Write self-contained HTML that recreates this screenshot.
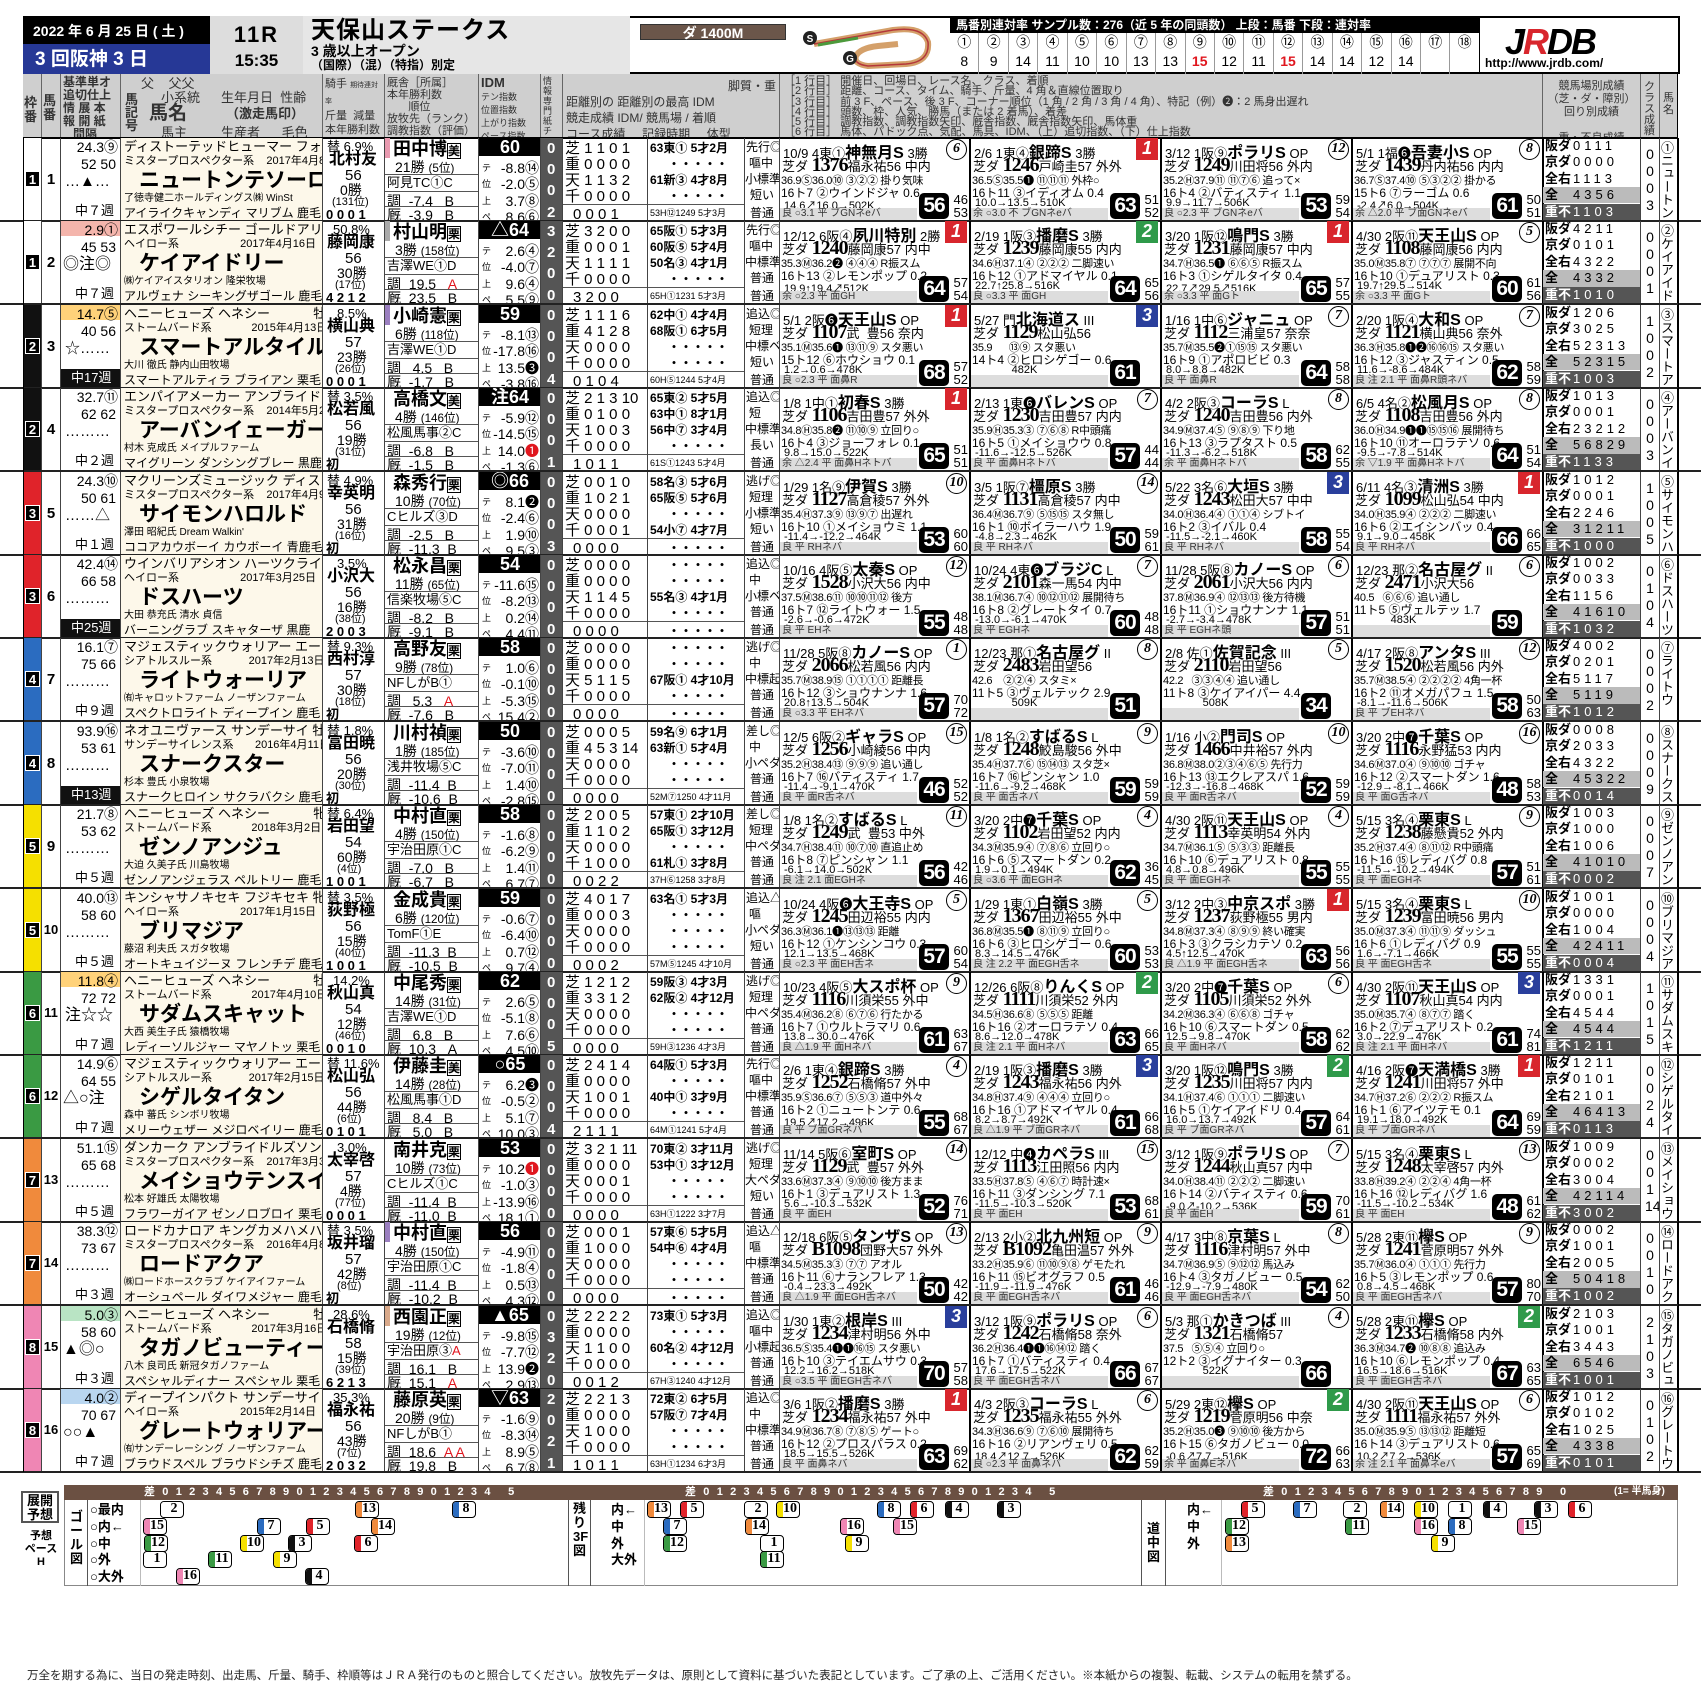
<!DOCTYPE html>
<html><head><meta charset="utf-8">
<style>
*{margin:0;padding:0;box-sizing:border-box}
body{width:1701px;height:1701px;position:relative;overflow:hidden;background:#fff;font-family:"Liberation Sans","Noto Sans CJK JP",sans-serif;color:#000}
.a{position:absolute;white-space:nowrap;line-height:1}
.r{position:absolute;left:0;width:1701px;height:84px;border-bottom:2px solid #222}
.c{position:absolute;top:0;height:82px;border-right:1px solid #444;overflow:hidden}
.L{position:absolute;white-space:nowrap;line-height:1}
.hl{position:absolute;left:0;right:0;border-top:1px solid #555}
.wk{left:23px;width:19px}
.ub{left:42px;width:19px;font-size:15px;text-align:center;padding-top:33px;font-weight:bold}
.wb{position:absolute;left:2px;top:33px;width:15px;height:16px;background:#000;color:#fff;font-size:13px;font-weight:bold;text-align:center;line-height:16px;border:1px solid #fff}
.od{left:61px;width:60px;font-size:14px}
.nm{left:121px;width:202px;background:#fdf8ea}
.jk{left:323px;width:62px;text-align:center}
.tr{left:385px;width:94px}
.id{left:479px;width:62px}
.ck{left:541px;width:22px;background:#555;color:#fff;font-weight:bold;font-size:15px}
.cr{left:563px;width:85px;font-size:15px}
.ds{left:648px;width:97px;font-size:12px;font-weight:bold}
.st{left:745px;width:35px;font-size:12px;text-align:center}
.p{width:191px;border-right:2px solid #000;font-size:13px}
.ss{left:1543px;width:98px;font-size:14px}
.cl{left:1641px;width:19px;font-size:14px;text-align:center}
.vn{left:1660px;width:18px;font-size:13px;writing-mode:vertical-rl;text-orientation:upright;padding-top:3px;padding-right:1px;border-right:1px solid #000}
.k{position:absolute;right:20px;top:55px;width:30px;height:26px;background:#000;color:#fff;font-size:21px;font-weight:bold;border-radius:5px;text-align:center;line-height:26px;letter-spacing:-1px}
.m{position:absolute;right:1px;top:55px;font-size:13px;line-height:13px;text-align:right}
.g{position:absolute;left:0;right:52px;top:70px;height:12px;background:#ddd;font-size:10px;line-height:12px;color:#333;padding-left:2px}
.f{position:absolute;right:2px;top:1px;width:21px;height:21px;border:1.5px solid #000;border-radius:50%;font-size:14px;font-weight:bold;text-align:center;line-height:18px;font-family:"Liberation Serif",serif}
.fr,.fg,.fb{border-radius:0;border:none;color:#fff;font-family:"Liberation Sans",sans-serif;font-size:18px;line-height:21px;width:22px;height:22px;top:0}
.fr{background:#d8262d}.fg{background:#2f9a4a}.fb{background:#2a3f9c}
.t{position:absolute;left:3px;top:1px;font-size:13px}
.t b{font-size:16px}
.tm{position:absolute;left:2px;top:16px;font-size:13px}
.tm b{font-family:"Liberation Serif",serif;font-size:20px;letter-spacing:-1px}
.l3{position:absolute;left:1px;top:34px;font-size:11px;letter-spacing:-0.3px}
.l4{position:absolute;left:1px;top:46px;font-size:12px}
.l5{position:absolute;left:4px;top:59px;font-size:11px}
.sr{position:absolute;left:0;width:98px;height:16.4px;line-height:16.4px;font-size:13px;letter-spacing:4px;padding-left:2px}
.sr b{display:inline-block;width:28px;letter-spacing:0}
.idh{position:absolute;left:0;top:0;width:62px;height:18px;background:#000;color:#fff;font-weight:bold;font-size:18px;text-align:center;line-height:18px}
.ir{position:absolute;left:0;width:62px;font-size:14px;text-align:right;padding-right:2px}
.ir i{font-style:normal;font-size:9px;position:absolute;left:3px;top:3px}
.mk{position:absolute;height:17px;width:24px;border:1.5px solid #000;border-radius:4px;font-family:"Liberation Serif",serif;font-weight:bold;font-size:14px;text-align:center;line-height:14px;background:#fff;overflow:hidden;padding-left:4px}
.mk s{position:absolute;left:0;top:0;bottom:0;width:6px;text-decoration:none}
.hd{position:absolute;top:74px;height:64px;background:#cfcfcf;border-right:1px solid #666;font-size:12px;line-height:1.15;overflow:hidden}
</style></head><body>

<!-- HEADER -->
<div class="a" style="left:23px;top:16px;width:1655px;height:58px;border:2px solid #000;border-left:none;border-right:none"></div>
<div class="a" style="left:23px;top:16px;width:187px;height:29px;background:#000;color:#fff;font-size:14px;font-weight:bold;padding:8px 0 0 10px">2022 年 6 月 25 日 ( 土 )</div>
<div class="a" style="left:23px;top:44px;width:187px;height:30px;background:#263896;color:#fff;font-size:19px;font-weight:bold;padding:6px 0 0 12px">3 回阪神 3 日</div>
<div class="a" style="left:210px;top:16px;width:93px;height:58px;background:#ddd;font-weight:bold;text-align:center"><div style="font-size:22px;padding-top:8px;letter-spacing:2px">11R</div><div style="font-size:17px;padding-top:6px">15:35</div></div>
<div class="a" style="left:303px;top:16px;width:327px;height:58px;background:#e6e6e6;padding-left:8px;overflow:hidden"><div style="font-size:24px;font-weight:bold;padding-top:2px;letter-spacing:1px;line-height:26px">天保山ステークス</div><div style="font-size:14px;font-weight:bold;line-height:15px">3 歳以上オープン</div><div style="font-size:12px;font-weight:bold;line-height:13px">（国際）（混）（特指）別定</div></div>
<div class="a" style="left:640px;top:24px;width:146px;height:16px;background:#6b564a;color:#fff;font-size:14px;font-weight:bold;text-align:center;line-height:16px;border:1px solid #333">ダ 1400M</div>
<svg class="a" style="left:798px;top:18px" width="152" height="54" viewBox="0 0 152 54"><path d="M16 26 L95 12 Q125 8 130 24 Q132 44 108 46 L70 48 Q55 46 58 38 Q62 30 80 28 L100 26" fill="none" stroke="#d4a06a" stroke-width="6"/><path d="M16 26 L95 12 Q125 8 130 24 Q132 44 108 46 L70 48 Q55 46 58 38" fill="none" stroke="#b4363a" stroke-width="1.5"/><path d="M20 27 L60 20" stroke="#4c9a3c" stroke-width="3"/><circle cx="12" cy="20" r="7" fill="#222"/><text x="12" y="24" font-size="10" fill="#fff" text-anchor="middle" font-weight="bold">S</text><circle cx="52" cy="40" r="7" fill="#222"/><text x="52" y="44" font-size="10" fill="#fff" text-anchor="middle" font-weight="bold">G</text></svg>
<div class="a" style="left:950px;top:17px;width:530px;height:16px;background:#000;color:#fff;font-size:12px;font-weight:bold;line-height:16px;padding-left:6px">馬番別連対率 サンプル数：276（近 5 年の同頭数） 上段：馬番 下段：連対率</div>
<div class="a" style="left:950px;top:33px;width:530px;height:41px;font-size:14px;display:flex">
<div style="flex:1;text-align:center;border-right:1px solid #999;line-height:19px">①<br>8</div><div style="flex:1;text-align:center;border-right:1px solid #999;line-height:19px">②<br>9</div><div style="flex:1;text-align:center;border-right:1px solid #999;line-height:19px">③<br>14</div><div style="flex:1;text-align:center;border-right:1px solid #999;line-height:19px">④<br>11</div><div style="flex:1;text-align:center;border-right:1px solid #999;line-height:19px">⑤<br>10</div><div style="flex:1;text-align:center;border-right:1px solid #999;line-height:19px">⑥<br>10</div><div style="flex:1;text-align:center;border-right:1px solid #999;line-height:19px">⑦<br>13</div><div style="flex:1;text-align:center;border-right:1px solid #999;line-height:19px">⑧<br>13</div><div style="flex:1;text-align:center;border-right:1px solid #999;line-height:19px">⑨<br><b style="color:#e0161e">15</b></div><div style="flex:1;text-align:center;border-right:1px solid #999;line-height:19px">⑩<br>12</div><div style="flex:1;text-align:center;border-right:1px solid #999;line-height:19px">⑪<br>11</div><div style="flex:1;text-align:center;border-right:1px solid #999;line-height:19px">⑫<br><b style="color:#e0161e">15</b></div><div style="flex:1;text-align:center;border-right:1px solid #999;line-height:19px">⑬<br>14</div><div style="flex:1;text-align:center;border-right:1px solid #999;line-height:19px">⑭<br>14</div><div style="flex:1;text-align:center;border-right:1px solid #999;line-height:19px">⑮<br>12</div><div style="flex:1;text-align:center;border-right:1px solid #999;line-height:19px">⑯<br>14</div><div style="flex:1;text-align:center;border-right:1px solid #999;line-height:19px">⑰<br>&nbsp;</div><div style="flex:1;text-align:center;border-right:1px solid #000;line-height:19px">⑱<br>&nbsp;</div></div>
<div class="a" style="left:1505px;top:24px;font-size:36px;font-weight:bold;font-style:italic;letter-spacing:-2px;font-family:'Liberation Sans',sans-serif">J<span style="color:#d8262d">R</span>DB</div>
<div class="a" style="left:1485px;top:57px;font-size:12px;font-weight:bold">http://www.jrdb.com/</div>
<div class="a" style="left:1678px;top:16px;height:58px;border-left:2px solid #000"></div>

<!-- COLUMN HEADER -->
<div class="hd" style="left:23px;width:19px;font-size:13px;padding:22px 1px 0;line-height:14px;font-weight:bold;color:#333">枠<br>番</div>
<div class="hd" style="left:42px;width:19px;font-size:13px;padding:20px 1px 0;line-height:14px;font-weight:bold;color:#333">馬<br>番</div>
<div class="hd" style="left:61px;width:60px;font-size:12px;padding:2px 2px;line-height:13px;font-weight:bold;color:#333">基準単オ<br>追切仕上<br>情 展 本<br>報 開 紙<br>&nbsp;&nbsp;&nbsp;間隔</div>
<div class="hd" style="left:121px;width:202px;font-size:13px;color:#333;padding:2px"><div class="L" style="left:20px;top:3px">父&nbsp;&nbsp;&nbsp;&nbsp;父父</div><div class="L" style="left:40px;top:17px">小系統</div><div class="L" style="left:100px;top:17px">生年月日&nbsp;&nbsp;性齢</div><div class="L" style="left:4px;top:19px;width:12px;white-space:normal;font-weight:bold">馬記号</div><div class="L" style="left:28px;top:30px;font-size:19px;font-weight:bold">馬名</div><div class="L" style="left:105px;top:33px;font-weight:bold">（激走馬印）</div><div class="L" style="left:40px;top:52px">馬主</div><div class="L" style="left:100px;top:52px">生産者&nbsp;&nbsp;&nbsp;&nbsp;&nbsp;&nbsp;毛色</div></div>
<div class="hd" style="left:323px;width:62px;padding:3px 2px;font-size:11px;line-height:14px;color:#333">騎手 <span style="font-size:7px">期待連対率</span><br>斤量&nbsp;&nbsp;減量<br>本年勝利数<br>&nbsp;&nbsp;&nbsp;順位<br>馬×騎手</div>
<div class="hd" style="left:385px;width:94px;padding:3px 2px;font-size:11px;line-height:12px;color:#333">厩舎［所属］<br>本年勝利数<br>&nbsp;&nbsp;&nbsp;&nbsp;&nbsp;&nbsp;&nbsp;順位<br>放牧先（ランク）<br>調教指数（評価）<br>厩舎指数（評価）</div>
<div class="hd" style="left:479px;width:62px;padding:2px 2px;font-size:9px;line-height:13px;color:#333"><b style="font-size:13px">IDM</b><br>テン指数<br>位置指数<br>上がり指数<br>ペース指数</div>
<div class="hd" style="left:541px;width:22px;font-size:9px;padding:2px 2px;line-height:10px;color:#333">情<br>報<br>専<br>門<br>紙<br>チ</div>
<div class="hd" style="left:563px;width:217px;font-size:12px;color:#333;padding:4px 3px;line-height:16px"><div style="text-align:right">脚質・重</div>距離別の 距離別の最高 IDM<br>競走成績 IDM/ 競馬場 / 着順<br>コース成績&nbsp;&nbsp;&nbsp;&nbsp;&nbsp;記録時期&nbsp;&nbsp;&nbsp;&nbsp;&nbsp;体型</div>
<div class="hd" style="left:780px;width:763px;font-size:11px;line-height:10.3px;padding:2px 4px;color:#333">［1 行目］ 開催日、回場日、レース名、クラス、着順<br>［2 行目］ 距離、コース、タイム、騎手、斤量、4 角＆直線位置取り<br>［3 行目］ 前 3 F、ペース、後 3 F、コーナー順位（1 角 / 2 角 / 3 角 / 4 角）、特記（例）❷：2 馬身出遅れ<br>［4 行目］ 頭数、枠、人気、勝馬（または 2 着馬）、着差<br>［5 行目］ 調教指数、調教指数矢印、厩舎指数、厩舎指数矢印、馬体重<br>［6 行目］ 馬体、パドック点、気配、馬具、IDM、（上）追切指数、（下）仕上指数</div>
<div class="hd" style="left:1543px;width:98px;font-size:11px;line-height:13px;padding:6px 2px;text-align:center;color:#333">競馬場別成績<br>（芝・ダ・障別）<br>回り別成績<br><br>重・不良成績</div>
<div class="hd" style="left:1641px;width:19px;font-size:11px;line-height:11px;padding:8px 3px;color:#333">クラス成績</div>
<div class="hd" style="left:1660px;width:18px;font-size:11px;line-height:12px;padding:18px 3px;color:#333;border-right:1px solid #000">馬名</div>
<div class="a" style="left:23px;top:137px;width:1655px;border-top:2px solid #000"></div>

<!-- ROWS -->
<div id="rows">
<!-- Row 1 -->
<div class="r" style="top:138px">
<div class="c wk" style="background:#fff"><div class="wb">1</div></div>
<div class="c ub">1</div>
<div class="c od"><div class="L" style="right:2px;top:2px">24.3⑨</div><div class="L" style="right:4px;top:19px">52 50</div><div class="L" style="left:4px;top:36px;font-size:15px">…▲…</div><div class="L" style="left:14px;top:66px;font-size:13px">中７週</div></div>
<div class="c nm"><div class="L" style="left:3px;top:2px;font-size:13px">ディストーテッドヒューマー フォ&nbsp;&nbsp;牡5</div><div class="L" style="left:3px;top:18px;font-size:11px">ミスタープロスペクター系&nbsp;&nbsp;&nbsp;&nbsp;2017年4月8日</div><div class="L" style="left:18px;top:32px;font-size:21px;font-weight:bold">ニュートンテソーロ</div><div class="L" style="left:3px;top:56px;font-size:10px">了徳寺健二ホールディングス㈱ WinSt</div><div class="L" style="left:3px;top:69px;font-size:12px">アイライクキャンディ マリブム 鹿毛</div></div>
<div class="c jk"><div class="L" style="left:4px;top:2px;font-size:13px">替 6.9%</div><div class="L" style="left:6px;top:14px;font-size:16px;font-weight:bold">北村友</div><div class="L" style="left:22px;top:30px;font-size:15px">56</div><div class="L" style="left:17px;top:45px;font-size:14px">0勝</div><div class="L" style="left:9px;top:59px;font-size:11px">(131位)</div><div class="L" style="left:3px;top:70px;font-size:13px;font-weight:bold">0 0 0 1</div></div>
<div class="c tr"><div class="L" style="left:0;top:0;width:5px;height:20px;background:#e99ab0"></div><div class="L" style="left:8px;top:2px;font-size:18px;font-weight:bold">田中博<span style="font-size:12px;border:1px solid #000">美</span></div><div class="L" style="left:10px;top:22px;font-size:14px">21勝 <small>(5位)</small></div><div class="hl" style="top:36px"></div><div class="L" style="left:2px;top:38px;font-size:13px">阿見TC①C</div><div class="hl" style="top:53px"></div><div class="L" style="left:2px;top:56px;font-size:14px">調&nbsp;&nbsp;-7.4&nbsp;&nbsp;&nbsp;B</div><div class="hl" style="top:68px"></div><div class="L" style="left:2px;top:70px;font-size:14px">厩&nbsp;&nbsp;-3.9&nbsp;&nbsp;&nbsp;B</div></div>
<div class="c id"><div class="idh">60</div><div class="ir" style="top:20px"><i>テ</i>-8.8⑭</div><div class="ir" style="top:36px"><i>位</i>-2.0⑤</div><div class="ir" style="top:53px"><i>上</i>3.7⑧</div><div class="ir" style="top:69px"><i>ペ</i>8.6⑥</div></div>
<div class="c ck"><div class="L" style="left:6px;top:3px">0</div><div class="L" style="left:6px;top:24px">0</div><div class="L" style="left:6px;top:45px">0</div><div class="L" style="left:6px;top:67px">2</div></div>
<div class="c cr"><div class="L" style="left:2px;top:3px">芝 1 1 0 1</div><div class="L" style="left:2px;top:19px">重 0 0 0 0</div><div class="L" style="left:2px;top:35px">天 1 1 3 2</div><div class="L" style="left:2px;top:51px">千 0 0 0 0</div><div class="hl" style="top:66px"></div><div class="L" style="left:10px;top:69px">0 0 0 1</div></div>
<div class="c ds"><div class="L" style="left:2px;top:4px">63東① 5才2月</div><div class="L" style="left:20px;top:20px">・・・・・</div><div class="L" style="left:2px;top:36px">61新③ 4才8月</div><div class="L" style="left:20px;top:52px">・・・・・</div><div class="hl" style="top:66px"></div><div class="L" style="left:2px;top:71px;font-size:9px;font-weight:normal">53H⑫1249 5才3月</div></div>
<div class="c st"><div class="L" style="left:1px;top:3px">先行◎</div><div class="L" style="left:4px;top:19px">嘔中</div><div class="L" style="left:0;top:35px">小標準</div><div class="L" style="left:5px;top:51px">短い</div><div class="L" style="left:5px;top:69px">普通</div></div>
<div class="c p" style="left:780px"><div class="t">10/9 4東①<b>神無月S</b> 3勝</div><i class="f">6</i><div class="tm">芝ダ <b>1376</b>福永祐56 中内</div><div class="l3">36.9Ⓢ36.0⑩ ③②② 掛り気味</div><div class="l4">16ト7 ②ウインドジャ 0.6</div><div class="l5">14.6↗16.0→502K</div><b class="k">56</b><span class="m">46<br>53</span><div class="g">良 ○3.1 平 ブGNネeバ</div></div>
<div class="c p" style="left:971px"><div class="t">2/6 1東④<b>銀蹄S</b> 3勝</div><i class="f fr">1</i><div class="tm">芝ダ <b>1246</b>戸崎圭57 外外</div><div class="l3">36.5Ⓢ35.5❶ ⑪⑪⑪ 外枠○</div><div class="l4">16ト11 ③イディオム 0.4</div><div class="l5">10.0→13.5→510K</div><b class="k">63</b><span class="m">51<br>52</span><div class="g">余 ○3.0 不 ブGNネeバ</div></div>
<div class="c p" style="left:1162px"><div class="t">3/12 1阪⑨<b>ポラリS</b> OP</div><i class="f">12</i><div class="tm">芝ダ <b>1249</b>川田将56 外内</div><div class="l3">35.2Ⓗ37.9⑪ ⑪⑦⑥ 追って×</div><div class="l4">16ト4 ②バティスティ 1.1</div><div class="l5">9.9→11.7→506K</div><b class="k">53</b><span class="m">59<br>54</span><div class="g">良 ○2.3 平 ブGNネeバ</div></div>
<div class="c p" style="left:1353px"><div class="t">5/1 1福❻<b>吾妻小S</b> OP</div><i class="f">8</i><div class="tm">芝ダ <b>1439</b>丹内祐56 内内</div><div class="l3">36.7Ⓢ37.4⑩ ⑤③②② 掛かる</div><div class="l4">15ト6 ⑦ラーゴム 0.6</div><div class="l5">-2.4↗6.0→504K</div><b class="k">61</b><span class="m">50<br>51</span><div class="g">余 △2.0 平 ブ面GNネeバ</div></div>
<div class="c ss"><div class="sr" style="top:0"><b>阪ダ</b>0111</div><div class="sr" style="top:16px"><b>京ダ</b>0000</div><div class="sr" style="top:33px"><b>全右</b>1113</div><div class="sr" style="top:49px;background:#bbb"><b>全</b>4356</div><div class="sr" style="top:66px;background:#555;color:#fff"><b>重不</b>1103</div></div>
<div class="c cl"><div class="L" style="left:4px;top:8px;line-height:17px;white-space:normal;width:10px">0 0 0 3</div></div>
<div class="c vn">①ニュートン</div>
</div>

<!-- Row 2 -->
<div class="r" style="top:221.4px">
<div class="c wk" style="background:#fff"><div class="wb">1</div></div>
<div class="c ub">2</div>
<div class="c od"><div class="L" style="left:0;top:0;width:60px;height:15px;background:#f4b5ac"></div><div class="L" style="right:2px;top:2px">2.9①</div><div class="L" style="right:4px;top:19px">45 53</div><div class="L" style="left:2px;top:36px;font-size:16px">◎注◎</div><div class="L" style="left:14px;top:66px;font-size:13px">中７週</div></div>
<div class="c nm"><div class="L" style="left:3px;top:2px;font-size:13px">エスポワールシチー ゴールドアリ&nbsp;&nbsp;牡5</div><div class="L" style="left:3px;top:18px;font-size:11px">ヘイロー系&nbsp;&nbsp;&nbsp;&nbsp;&nbsp;&nbsp;&nbsp;&nbsp;&nbsp;&nbsp;&nbsp;&nbsp;&nbsp;&nbsp;&nbsp;&nbsp;&nbsp;&nbsp;&nbsp;&nbsp;2017年4月16日</div><div class="L" style="left:18px;top:32px;font-size:21px;font-weight:bold">ケイアイドリー</div><div class="L" style="left:3px;top:56px;font-size:10px">㈱ケイアイスタリオン 隆栄牧場</div><div class="L" style="left:3px;top:69px;font-size:12px">アルヴェナ シーキングザゴール 鹿毛</div></div>
<div class="c jk"><div class="L" style="left:10px;top:2px;font-size:13px">50.8%</div><div class="L" style="left:4px;top:14px;font-size:16px;font-weight:bold">藤岡康</div><div class="L" style="left:22px;top:30px;font-size:15px">56</div><div class="L" style="left:14px;top:45px;font-size:14px">30勝</div><div class="L" style="left:12px;top:59px;font-size:11px">(17位)</div><div class="L" style="left:3px;top:70px;font-size:13px;font-weight:bold">4 2 1 2</div></div>
<div class="c tr"><div class="L" style="left:0;top:0;width:5px;height:20px;background:#aaa"></div><div class="L" style="left:8px;top:2px;font-size:18px;font-weight:bold">村山明<span style="font-size:12px;border:1px solid #000">栗</span></div><div class="L" style="left:10px;top:22px;font-size:14px">3勝 <small>(158位)</small></div><div class="hl" style="top:36px"></div><div class="L" style="left:2px;top:38px;font-size:13px">吉澤WE①D</div><div class="hl" style="top:53px"></div><div class="L" style="left:2px;top:56px;font-size:14px">調&nbsp;&nbsp;19.5&nbsp;&nbsp;&nbsp;<span style="color:#e0161e">A</span></div><div class="hl" style="top:68px"></div><div class="L" style="left:2px;top:70px;font-size:14px">厩&nbsp;&nbsp;23.5&nbsp;&nbsp;&nbsp;B</div></div>
<div class="c id"><div class="idh">△64</div><div class="ir" style="top:20px"><i>テ</i>2.6④</div><div class="ir" style="top:36px"><i>位</i>-4.0⑦</div><div class="ir" style="top:53px"><i>上</i>9.6④</div><div class="ir" style="top:69px"><i>ペ</i>5.5⑨</div></div>
<div class="c ck"><div class="L" style="left:6px;top:3px">3</div><div class="L" style="left:6px;top:24px">2</div><div class="L" style="left:6px;top:45px">0</div><div class="L" style="left:6px;top:67px">0</div></div>
<div class="c cr"><div class="L" style="left:2px;top:3px">芝 3 2 0 0</div><div class="L" style="left:2px;top:19px">重 0 0 0 1</div><div class="L" style="left:2px;top:35px">天 1 1 1 1</div><div class="L" style="left:2px;top:51px">千 0 0 0 0</div><div class="hl" style="top:66px"></div><div class="L" style="left:10px;top:69px">3 2 0 0</div></div>
<div class="c ds"><div class="L" style="left:2px;top:4px">65阪① 5才3月</div><div class="L" style="left:2px;top:20px">60阪⑤ 5才4月</div><div class="L" style="left:2px;top:36px">50名③ 4才1月</div><div class="L" style="left:20px;top:52px">・・・・・</div><div class="hl" style="top:66px"></div><div class="L" style="left:2px;top:71px;font-size:9px;font-weight:normal">65H①1231 5才3月</div></div>
<div class="c st"><div class="L" style="left:1px;top:3px">先行◎</div><div class="L" style="left:4px;top:19px">嘔中</div><div class="L" style="left:0;top:35px">中標準</div><div class="L" style="left:5px;top:51px">普通</div><div class="L" style="left:5px;top:69px">普通</div></div>
<div class="c p" style="left:780px"><div class="t">12/12 6阪④<b>夙川特別</b> 2勝</div><i class="f fr">1</i><div class="tm">芝ダ <b>1240</b>藤岡康57 内中</div><div class="l3">35.3Ⓜ36.2❷ ④④④ R振スム</div><div class="l4">16ト13 ②レモンポップ 0.2</div><div class="l5">19.9↑19.4↗512K</div><b class="k">64</b><span class="m">57<br>54</span><div class="g">余 ○2.3 平 面GH</div></div>
<div class="c p" style="left:971px"><div class="t">2/19 1阪③<b>播磨S</b> 3勝</div><i class="f fg">2</i><div class="tm">芝ダ <b>1239</b>藤岡康55 内内</div><div class="l3">34.6Ⓗ37.1④ ②②② 二脚速い</div><div class="l4">16ト12 ①アドマイヤル 0.1</div><div class="l5">22.7↑25.8→516K</div><b class="k">64</b><span class="m">65<br>56</span><div class="g">良 ○3.3 平 面GH</div></div>
<div class="c p" style="left:1162px"><div class="t">3/20 1阪⑫<b>鳴門S</b> 3勝</div><i class="f fr">1</i><div class="tm">芝ダ <b>1231</b>藤岡康57 中内</div><div class="l3">34.7Ⓗ36.5❶ ⑥⑥⑤ R振スム</div><div class="l4">16ト3 ①シゲルタイタ 0.4</div><div class="l5">22.7↗29.5↗516K</div><b class="k">65</b><span class="m">57<br>55</span><div class="g">余 ○3.3 平 面Gト</div></div>
<div class="c p" style="left:1353px"><div class="t">4/30 2阪⑪<b>天王山S</b> OP</div><i class="f">5</i><div class="tm">芝ダ <b>1108</b>藤岡康56 内内</div><div class="l3">35.0Ⓜ35.8⑦ ⑦⑦⑦ 展開不向</div><div class="l4">16ト10 ①デュアリスト 0.3</div><div class="l5">19.7↑29.5→514K</div><b class="k">60</b><span class="m">61<br>56</span><div class="g">余 ○3.3 平 面Gト</div></div>
<div class="c ss"><div class="sr" style="top:0"><b>阪ダ</b>4211</div><div class="sr" style="top:16px"><b>京ダ</b>0101</div><div class="sr" style="top:33px"><b>全右</b>4322</div><div class="sr" style="top:49px;background:#bbb"><b>全</b>4332</div><div class="sr" style="top:66px;background:#555;color:#fff"><b>重不</b>1010</div></div>
<div class="c cl"><div class="L" style="left:4px;top:8px;line-height:17px;white-space:normal;width:10px">0 0 0 1</div></div>
<div class="c vn">②ケイアイド</div>
</div>

<!-- Row 3 -->
<div class="r" style="top:304.8px">
<div class="c wk" style="background:#111"><div class="wb">2</div></div>
<div class="c ub">3</div>
<div class="c od"><div class="L" style="left:0;top:0;width:60px;height:15px;background:#ffd27a"></div><div class="L" style="right:2px;top:2px">14.7⑤</div><div class="L" style="right:4px;top:19px">40 56</div><div class="L" style="left:4px;top:36px;font-size:15px">☆……</div><div class="L" style="left:0;top:64px;width:60px;height:18px;background:#111;color:#fff;font-size:13px;padding:2px 0 0 10px">中17週</div></div>
<div class="c nm"><div class="L" style="left:3px;top:2px;font-size:13px">ヘニーヒューズ ヘネシー&nbsp;&nbsp;&nbsp;&nbsp;&nbsp;&nbsp;&nbsp;&nbsp;&nbsp;&nbsp;&nbsp;&nbsp;牡7</div><div class="L" style="left:3px;top:18px;font-size:11px">ストームバード系&nbsp;&nbsp;&nbsp;&nbsp;&nbsp;&nbsp;&nbsp;&nbsp;&nbsp;&nbsp;&nbsp;&nbsp;&nbsp;2015年4月13日</div><div class="L" style="left:18px;top:32px;font-size:21px;font-weight:bold">スマートアルタイル</div><div class="L" style="left:3px;top:56px;font-size:10px">大川 徹氏 静内山田牧場</div><div class="L" style="left:3px;top:69px;font-size:12px">スマートアルティラ ブライアン 栗毛</div></div>
<div class="c jk"><div class="L" style="left:14px;top:2px;font-size:13px">8.5%</div><div class="L" style="left:4px;top:14px;font-size:16px;font-weight:bold">横山典</div><div class="L" style="left:22px;top:30px;font-size:15px">57</div><div class="L" style="left:14px;top:45px;font-size:14px">23勝</div><div class="L" style="left:12px;top:59px;font-size:11px">(26位)</div><div class="L" style="left:3px;top:70px;font-size:13px;font-weight:bold">0 0 0 1</div></div>
<div class="c tr"><div class="L" style="left:0;top:0;width:5px;height:20px;background:#9b7fc0"></div><div class="L" style="left:8px;top:2px;font-size:18px;font-weight:bold">小崎憲<span style="font-size:12px;border:1px solid #000">栗</span></div><div class="L" style="left:10px;top:22px;font-size:14px">6勝 <small>(118位)</small></div><div class="hl" style="top:36px"></div><div class="L" style="left:2px;top:38px;font-size:13px">吉澤WE①D</div><div class="hl" style="top:53px"></div><div class="L" style="left:2px;top:56px;font-size:14px">調&nbsp;&nbsp;&nbsp;4.5&nbsp;&nbsp;&nbsp;B</div><div class="hl" style="top:68px"></div><div class="L" style="left:2px;top:70px;font-size:14px">厩&nbsp;&nbsp;-1.7&nbsp;&nbsp;&nbsp;B</div></div>
<div class="c id"><div class="idh">59</div><div class="ir" style="top:20px"><i>テ</i>-8.1⑬</div><div class="ir" style="top:36px"><i>位</i>-17.8⑯</div><div class="ir" style="top:53px"><i>上</i>13.5❸</div><div class="ir" style="top:69px"><i>ペ</i>-3.8⑯</div></div>
<div class="c ck"><div class="L" style="left:6px;top:3px">0</div><div class="L" style="left:6px;top:24px">0</div><div class="L" style="left:6px;top:45px">0</div><div class="L" style="left:6px;top:67px">4</div></div>
<div class="c cr"><div class="L" style="left:2px;top:3px">芝 1 1 1 6</div><div class="L" style="left:2px;top:19px">重 4 1 2 8</div><div class="L" style="left:2px;top:35px">天 0 0 0 0</div><div class="L" style="left:2px;top:51px">千 0 0 0 0</div><div class="hl" style="top:66px"></div><div class="L" style="left:10px;top:69px">0 1 0 4</div></div>
<div class="c ds"><div class="L" style="left:2px;top:4px">62中① 4才4月</div><div class="L" style="left:2px;top:20px">68阪① 6才5月</div><div class="L" style="left:20px;top:36px">・・・・・</div><div class="L" style="left:20px;top:52px">・・・・・</div><div class="hl" style="top:66px"></div><div class="L" style="left:2px;top:71px;font-size:9px;font-weight:normal">60H⑤1244 5才4月</div></div>
<div class="c st"><div class="L" style="left:1px;top:3px">追込◎</div><div class="L" style="left:4px;top:19px">短理</div><div class="L" style="left:0;top:35px">中標ベ</div><div class="L" style="left:5px;top:51px">短い</div><div class="L" style="left:5px;top:69px">普通</div></div>
<div class="c p" style="left:780px"><div class="t">5/1 2阪❻<b>天王山S</b> OP</div><i class="f fr">1</i><div class="tm">芝ダ <b>1107</b>武&nbsp;&nbsp;豊56 奈内</div><div class="l3">35.1Ⓜ35.6❶ ⑬⑪⑨ スタ悪い</div><div class="l4">15ト12 ⑥ホウショウ 0.1</div><div class="l5">1.2→0.6→478K</div><b class="k">68</b><span class="m">57<br>52</span><div class="g">良 ○2.3 平 面鼻R</div></div>
<div class="c p" style="left:971px"><div class="t">5/27 門<b>北海道ス</b> III</div><i class="f fb">3</i><div class="tm">芝ダ <b>1129</b>松山弘56</div><div class="l3">35.9&nbsp;&nbsp;&nbsp;&nbsp;&nbsp;&nbsp;⑬⑨ スタ悪い</div><div class="l4">14ト4 ②ヒロシゲゴー 0.6</div><div class="l5">&nbsp;&nbsp;&nbsp;&nbsp;&nbsp;&nbsp;&nbsp;&nbsp;&nbsp;&nbsp;&nbsp;&nbsp;482K</div><b class="k">61</b><span class="m"><br></span><div class="g"></div></div>
<div class="c p" style="left:1162px"><div class="t">1/16 1中⑥<b>ジャニュ</b> OP</div><i class="f">7</i><div class="tm">芝ダ <b>1112</b>三浦皇57 奈奈</div><div class="l3">35.7Ⓜ35.5❷①⑮⑮ スタ悪い</div><div class="l4">16ト9 ①アポロビビ 0.3</div><div class="l5">8.0→8.8→482K</div><b class="k">64</b><span class="m">58<br>58</span><div class="g">良 平 面鼻R</div></div>
<div class="c p" style="left:1353px"><div class="t">2/20 1阪④<b>大和S</b> OP</div><i class="f">7</i><div class="tm">芝ダ <b>1121</b>横山典56 奈外</div><div class="l3">36.3Ⓗ35.8❶❷⑯⑯⑮ スタ悪い</div><div class="l4">16ト12 ③ジャスティン 0.5</div><div class="l5">11.6→-8.6→484K</div><b class="k">62</b><span class="m">58<br>59</span><div class="g">良 注 2.1 平 面鼻R頭ネバ</div></div>
<div class="c ss"><div class="sr" style="top:0"><b>阪ダ</b>1206</div><div class="sr" style="top:16px"><b>京ダ</b>3025</div><div class="sr" style="top:33px"><b>全右</b>52313</div><div class="sr" style="top:49px;background:#bbb"><b>全</b>52315</div><div class="sr" style="top:66px;background:#555;color:#fff"><b>重不</b>1003</div></div>
<div class="c cl"><div class="L" style="left:4px;top:8px;line-height:17px;white-space:normal;width:10px">1 0 0 2</div></div>
<div class="c vn">③スマートア</div>
</div>

<!-- Row 4 -->
<div class="r" style="top:388.2px">
<div class="c wk" style="background:#111"><div class="wb">2</div></div>
<div class="c ub">4</div>
<div class="c od"><div class="L" style="right:2px;top:2px">32.7⑪</div><div class="L" style="right:4px;top:19px">62 62</div><div class="L" style="left:4px;top:36px;font-size:15px">………</div><div class="L" style="left:14px;top:66px;font-size:13px">中２週</div></div>
<div class="c nm"><div class="L" style="left:3px;top:2px;font-size:13px">エンパイアメーカー アンブライド 牡8</div><div class="L" style="left:3px;top:18px;font-size:11px">ミスタープロスペクター系&nbsp;&nbsp;&nbsp;&nbsp;2014年5月25日</div><div class="L" style="left:18px;top:32px;font-size:21px;font-weight:bold">アーバンイェーガー</div><div class="L" style="left:3px;top:56px;font-size:10px">村木 克成氏 メイプルファーム</div><div class="L" style="left:3px;top:69px;font-size:12px">マイグリーン ダンシングブレー 黒鹿</div></div>
<div class="c jk"><div class="L" style="left:4px;top:2px;font-size:13px">替 3.5%</div><div class="L" style="left:4px;top:14px;font-size:16px;font-weight:bold">松若風</div><div class="L" style="left:22px;top:30px;font-size:15px">56</div><div class="L" style="left:14px;top:45px;font-size:14px">19勝</div><div class="L" style="left:12px;top:59px;font-size:11px">(31位)</div><div class="L" style="left:3px;top:70px;font-size:13px;font-weight:bold">初</div></div>
<div class="c tr"><div class="L" style="left:8px;top:2px;font-size:18px;font-weight:bold">高橋文<span style="font-size:12px;border:1px solid #000">美</span></div><div class="L" style="left:10px;top:22px;font-size:14px">4勝 <small>(146位)</small></div><div class="hl" style="top:36px"></div><div class="L" style="left:2px;top:38px;font-size:13px">松風馬事②C</div><div class="hl" style="top:53px"></div><div class="L" style="left:2px;top:56px;font-size:14px">調&nbsp;&nbsp;-6.8&nbsp;&nbsp;&nbsp;B</div><div class="hl" style="top:68px"></div><div class="L" style="left:2px;top:70px;font-size:14px">厩&nbsp;&nbsp;-1.5&nbsp;&nbsp;&nbsp;B</div></div>
<div class="c id"><div class="idh">注64</div><div class="ir" style="top:20px"><i>テ</i>-5.9⑫</div><div class="ir" style="top:36px"><i>位</i>-14.5⑮</div><div class="ir" style="top:53px"><i>上</i>14.0<span style="color:#e0161e">❶</span></div><div class="ir" style="top:69px"><i>ペ</i>-1.3⑥</div></div>
<div class="c ck"><div class="L" style="left:6px;top:3px">0</div><div class="L" style="left:6px;top:24px">0</div><div class="L" style="left:6px;top:45px">0</div><div class="L" style="left:6px;top:67px">1</div></div>
<div class="c cr"><div class="L" style="left:2px;top:3px">芝 2 1 3 10</div><div class="L" style="left:2px;top:19px">重 0 1 0 0</div><div class="L" style="left:2px;top:35px">天 1 0 0 3</div><div class="L" style="left:2px;top:51px">千 0 0 0 0</div><div class="hl" style="top:66px"></div><div class="L" style="left:10px;top:69px">1 0 1 1</div></div>
<div class="c ds"><div class="L" style="left:2px;top:4px">65東② 5才5月</div><div class="L" style="left:2px;top:20px">63中① 8才1月</div><div class="L" style="left:2px;top:36px">56中⑦ 3才4月</div><div class="L" style="left:20px;top:52px">・・・・・</div><div class="hl" style="top:66px"></div><div class="L" style="left:2px;top:71px;font-size:9px;font-weight:normal">61S①1243 5才4月</div></div>
<div class="c st"><div class="L" style="left:1px;top:3px">追込◎</div><div class="L" style="left:4px;top:19px">短</div><div class="L" style="left:0;top:35px">中標準</div><div class="L" style="left:5px;top:51px">長い</div><div class="L" style="left:5px;top:69px">普通</div></div>
<div class="c p" style="left:780px"><div class="t">1/8 1中①<b>初春S</b> 3勝</div><i class="f fr">1</i><div class="tm">芝ダ <b>1106</b>吉田豊57 外外</div><div class="l3">34.8Ⓗ35.8❷ ⑪⑩⑨ 立回り○</div><div class="l4">16ト4 ③ジョーフォレ 0.1</div><div class="l5">9.8→15.0→522K</div><b class="k">65</b><span class="m">51<br>51</span><div class="g">余 △2.4 平 面鼻Hネトバ</div></div>
<div class="c p" style="left:971px"><div class="t">2/13 1東❻<b>バレンS</b> OP</div><i class="f">7</i><div class="tm">芝ダ <b>1230</b>吉田豊57 内内</div><div class="l3">35.9Ⓗ35.3③ ⑦⑥⑧ R中頭痛</div><div class="l4">16ト5 ①メイショウウ 0.8</div><div class="l5">-11.6→-12.5→526K</div><b class="k">57</b><span class="m">44<br>44</span><div class="g">良 平 面鼻Hネトバ</div></div>
<div class="c p" style="left:1162px"><div class="t">4/2 2阪③<b>コーラS</b> L</div><i class="f">8</i><div class="tm">芝ダ <b>1240</b>吉田豊56 内外</div><div class="l3">34.9Ⓜ37.4⑤ ⑨⑧⑨ 下り地</div><div class="l4">16ト13 ③ラプタスト 0.5</div><div class="l5">-11.3→-6.2→518K</div><b class="k">58</b><span class="m">62<br>55</span><div class="g">余 平 面鼻Hネトバ</div></div>
<div class="c p" style="left:1353px"><div class="t">6/5 4名②<b>松風月S</b> OP</div><i class="f">8</i><div class="tm">芝ダ <b>1108</b>吉田豊56 外内</div><div class="l3">36.0Ⓗ34.9❶❶⑮⑮⑯ 展開待ち</div><div class="l4">16ト10 ⑪オーロラテソ 0.6</div><div class="l5">-9.5→-7.8→514K</div><b class="k">64</b><span class="m">51<br>54</span><div class="g">余 ▽1.9 平 面鼻Hネトバ</div></div>
<div class="c ss"><div class="sr" style="top:0"><b>阪ダ</b>1013</div><div class="sr" style="top:16px"><b>京ダ</b>0001</div><div class="sr" style="top:33px"><b>全右</b>23212</div><div class="sr" style="top:49px;background:#bbb"><b>全</b>56829</div><div class="sr" style="top:66px;background:#555;color:#fff"><b>重不</b>1133</div></div>
<div class="c cl"><div class="L" style="left:4px;top:8px;line-height:17px;white-space:normal;width:10px">0 0 0 3</div></div>
<div class="c vn">④アーバンイ</div>
</div>

<!-- Row 5 -->
<div class="r" style="top:471.6px">
<div class="c wk" style="background:#e0232a"><div class="wb">3</div></div>
<div class="c ub">5</div>
<div class="c od"><div class="L" style="right:2px;top:2px">24.3⑩</div><div class="L" style="right:4px;top:19px">50 61</div><div class="L" style="left:4px;top:36px;font-size:15px">……△</div><div class="L" style="left:14px;top:66px;font-size:13px">中１週</div></div>
<div class="c nm"><div class="L" style="left:3px;top:2px;font-size:13px">マクリーンズミュージック ディス 牡5</div><div class="L" style="left:3px;top:18px;font-size:11px">ミスタープロスペクター系&nbsp;&nbsp;&nbsp;&nbsp;2017年4月9日</div><div class="L" style="left:18px;top:32px;font-size:21px;font-weight:bold">サイモンハロルド</div><div class="L" style="left:3px;top:56px;font-size:10px">澤田 昭紀氏 Dream Walkin'</div><div class="L" style="left:3px;top:69px;font-size:12px">ココアカウボーイ カウボーイ 青鹿毛</div></div>
<div class="c jk"><div class="L" style="left:4px;top:2px;font-size:13px">替 4.9%</div><div class="L" style="left:4px;top:14px;font-size:16px;font-weight:bold">幸英明</div><div class="L" style="left:22px;top:30px;font-size:15px">56</div><div class="L" style="left:14px;top:45px;font-size:14px">31勝</div><div class="L" style="left:12px;top:59px;font-size:11px">(16位)</div><div class="L" style="left:3px;top:70px;font-size:13px;font-weight:bold">初</div></div>
<div class="c tr"><div class="L" style="left:8px;top:2px;font-size:18px;font-weight:bold">森秀行<span style="font-size:12px;border:1px solid #000">栗</span></div><div class="L" style="left:10px;top:22px;font-size:14px">10勝 <small>(70位)</small></div><div class="hl" style="top:36px"></div><div class="L" style="left:2px;top:38px;font-size:13px">Cヒルズ③D</div><div class="hl" style="top:53px"></div><div class="L" style="left:2px;top:56px;font-size:14px">調&nbsp;&nbsp;-2.5&nbsp;&nbsp;&nbsp;B</div><div class="hl" style="top:68px"></div><div class="L" style="left:2px;top:70px;font-size:14px">厩&nbsp;&nbsp;-11.3&nbsp;&nbsp;B</div></div>
<div class="c id"><div class="idh">◎66</div><div class="ir" style="top:20px"><i>テ</i>8.1❷</div><div class="ir" style="top:36px"><i>位</i>-2.4⑥</div><div class="ir" style="top:53px"><i>上</i>1.9⑩</div><div class="ir" style="top:69px"><i>ペ</i>9.5③</div></div>
<div class="c ck"><div class="L" style="left:6px;top:3px">0</div><div class="L" style="left:6px;top:24px">0</div><div class="L" style="left:6px;top:45px">0</div><div class="L" style="left:6px;top:67px">3</div></div>
<div class="c cr"><div class="L" style="left:2px;top:3px">芝 0 0 1 0</div><div class="L" style="left:2px;top:19px">重 1 0 2 1</div><div class="L" style="left:2px;top:35px">天 0 0 0 0</div><div class="L" style="left:2px;top:51px">千 0 0 0 1</div><div class="hl" style="top:66px"></div><div class="L" style="left:10px;top:69px">0 0 0 0</div></div>
<div class="c ds"><div class="L" style="left:2px;top:4px">58名③ 5才6月</div><div class="L" style="left:2px;top:20px">65阪⑤ 5才6月</div><div class="L" style="left:20px;top:36px">・・・・・</div><div class="L" style="left:2px;top:52px">54小⑦ 4才7月</div><div class="hl" style="top:66px"></div><div class="L" style="left:20px;top:70px">・・・・・</div></div>
<div class="c st"><div class="L" style="left:1px;top:3px">逃げ◎</div><div class="L" style="left:4px;top:19px">短理</div><div class="L" style="left:0;top:35px">小標準</div><div class="L" style="left:5px;top:51px">短い</div><div class="L" style="left:5px;top:69px">普通</div></div>
<div class="c p" style="left:780px"><div class="t">1/29 1名⑨<b>伊賀S</b> 3勝</div><i class="f">10</i><div class="tm">芝ダ <b>1127</b>高倉稜57 外外</div><div class="l3">35.4Ⓗ37.3⑨ ⑬⑨⑦ 出遅れ</div><div class="l4">16ト10 ①メイショウミ 1.1</div><div class="l5">-11.4→-12.2→464K</div><b class="k">53</b><span class="m">60<br>60</span><div class="g">良 平 RHネバ</div></div>
<div class="c p" style="left:971px"><div class="t">3/5 1阪⑦<b>橿原S</b> 3勝</div><i class="f">14</i><div class="tm">芝ダ <b>1131</b>高倉稜57 内中</div><div class="l3">36.4Ⓜ36.7⑨ ⑤⑮⑮ スタ無し</div><div class="l4">16ト1 ⑩ボイラーハウ 1.9</div><div class="l5">-4.8→2.3→462K</div><b class="k">50</b><span class="m">59<br>61</span><div class="g">良 平 RHネバ</div></div>
<div class="c p" style="left:1162px"><div class="t">5/22 3名⑥<b>大垣S</b> 3勝</div><i class="f fb">3</i><div class="tm">芝ダ <b>1243</b>松田大57 中中</div><div class="l3">34.0Ⓗ36.4④ ①①④ シブトイ</div><div class="l4">16ト2 ③イバル 0.4</div><div class="l5">-11.5→-2.1→460K</div><b class="k">58</b><span class="m">55<br>54</span><div class="g">良 平 RHネバ</div></div>
<div class="c p" style="left:1353px"><div class="t">6/11 4名③<b>清洲S</b> 3勝</div><i class="f fr">1</i><div class="tm">芝ダ <b>1099</b>松山弘54 中内</div><div class="l3">34.0Ⓗ35.9④ ②②② 二脚速い</div><div class="l4">16ト6 ②エイシンバッ 0.4</div><div class="l5">9.1→9.0→458K</div><b class="k">66</b><span class="m">66<br>65</span><div class="g">良 平 RHネバ</div></div>
<div class="c ss"><div class="sr" style="top:0"><b>阪ダ</b>1012</div><div class="sr" style="top:16px"><b>京ダ</b>0001</div><div class="sr" style="top:33px"><b>全右</b>2246</div><div class="sr" style="top:49px;background:#bbb"><b>全</b>31211</div><div class="sr" style="top:66px;background:#555;color:#fff"><b>重不</b>1000</div></div>
<div class="c cl"><div class="L" style="left:4px;top:8px;line-height:17px;white-space:normal;width:10px">1 0 0 5</div></div>
<div class="c vn">⑤サイモンハ</div>
</div>

<!-- Row 6 -->
<div class="r" style="top:555px">
<div class="c wk" style="background:#e0232a"><div class="wb">3</div></div>
<div class="c ub">6</div>
<div class="c od"><div class="L" style="right:2px;top:2px">42.4⑭</div><div class="L" style="right:4px;top:19px">66 58</div><div class="L" style="left:4px;top:36px;font-size:15px">………</div><div class="L" style="left:0;top:64px;width:60px;height:18px;background:#111;color:#fff;font-size:13px;padding:2px 0 0 10px">中25週</div></div>
<div class="c nm"><div class="L" style="left:3px;top:2px;font-size:13px">ウインバリアシオン ハーツクライ 牡5</div><div class="L" style="left:3px;top:18px;font-size:11px">ヘイロー系&nbsp;&nbsp;&nbsp;&nbsp;&nbsp;&nbsp;&nbsp;&nbsp;&nbsp;&nbsp;&nbsp;&nbsp;&nbsp;&nbsp;&nbsp;&nbsp;&nbsp;&nbsp;&nbsp;&nbsp;2017年3月25日</div><div class="L" style="left:18px;top:32px;font-size:21px;font-weight:bold">ドスハーツ</div><div class="L" style="left:3px;top:56px;font-size:10px">大田 恭充氏 清水 貞信</div><div class="L" style="left:3px;top:69px;font-size:12px">バーニングラブ スキャターザ 黒鹿</div></div>
<div class="c jk"><div class="L" style="left:14px;top:2px;font-size:13px">3.5%</div><div class="L" style="left:4px;top:14px;font-size:16px;font-weight:bold">小沢大</div><div class="L" style="left:22px;top:30px;font-size:15px">56</div><div class="L" style="left:14px;top:45px;font-size:14px">16勝</div><div class="L" style="left:12px;top:59px;font-size:11px">(38位)</div><div class="L" style="left:3px;top:70px;font-size:13px;font-weight:bold">2 0 0 3</div></div>
<div class="c tr"><div class="L" style="left:8px;top:2px;font-size:18px;font-weight:bold">松永昌<span style="font-size:12px;border:1px solid #000">栗</span></div><div class="L" style="left:10px;top:22px;font-size:14px">11勝 <small>(65位)</small></div><div class="hl" style="top:36px"></div><div class="L" style="left:2px;top:38px;font-size:13px">信楽牧場⑤C</div><div class="hl" style="top:53px"></div><div class="L" style="left:2px;top:56px;font-size:14px">調&nbsp;&nbsp;-8.2&nbsp;&nbsp;&nbsp;B</div><div class="hl" style="top:68px"></div><div class="L" style="left:2px;top:70px;font-size:14px">厩&nbsp;&nbsp;-9.1&nbsp;&nbsp;&nbsp;B</div></div>
<div class="c id"><div class="idh">54</div><div class="ir" style="top:20px"><i>テ</i>-11.6⑮</div><div class="ir" style="top:36px"><i>位</i>-8.2⑬</div><div class="ir" style="top:53px"><i>上</i>0.2⑭</div><div class="ir" style="top:69px"><i>ペ</i>4.4⑪</div></div>
<div class="c ck"><div class="L" style="left:6px;top:3px">0</div><div class="L" style="left:6px;top:24px">0</div><div class="L" style="left:6px;top:45px">0</div><div class="L" style="left:6px;top:67px">0</div></div>
<div class="c cr"><div class="L" style="left:2px;top:3px">芝 0 0 0 0</div><div class="L" style="left:2px;top:19px">重 0 0 0 0</div><div class="L" style="left:2px;top:35px">天 1 1 4 5</div><div class="L" style="left:2px;top:51px">千 0 0 0 0</div><div class="hl" style="top:66px"></div><div class="L" style="left:10px;top:69px">0 0 0 0</div></div>
<div class="c ds"><div class="L" style="left:20px;top:4px">・・・・・</div><div class="L" style="left:20px;top:20px">・・・・・</div><div class="L" style="left:2px;top:36px">55名③ 4才1月</div><div class="L" style="left:20px;top:52px">・・・・・</div><div class="hl" style="top:66px"></div><div class="L" style="left:20px;top:70px">・・・・・</div></div>
<div class="c st"><div class="L" style="left:1px;top:3px">追込◎</div><div class="L" style="left:4px;top:19px">中</div><div class="L" style="left:0;top:35px">小標ベ</div><div class="L" style="left:5px;top:51px">普通</div><div class="L" style="left:5px;top:69px">普通</div></div>
<div class="c p" style="left:780px"><div class="t">10/16 4阪⑤<b>太秦S</b> OP</div><i class="f">12</i><div class="tm">芝ダ <b>1528</b>小沢大56 内中</div><div class="l3">37.5Ⓜ38.6⑪ ⑩⑩⑪⑫ 後方</div><div class="l4">16ト7 ⑫ライトウォー 1.5</div><div class="l5">-2.6→-0.6→472K</div><b class="k">55</b><span class="m">48<br>48</span><div class="g">良 平 EHネ</div></div>
<div class="c p" style="left:971px"><div class="t">10/24 4東❻<b>ブラジC</b> L</div><i class="f">7</i><div class="tm">芝ダ <b>2101</b>森一馬54 内中</div><div class="l3">38.1Ⓜ36.7④ ⑩⑫⑪⑫ 展開待ち</div><div class="l4">16ト8 ②グレートタイ 0.7</div><div class="l5">-13.0→-6.1→470K</div><b class="k">60</b><span class="m">48<br>48</span><div class="g">良 平 EGHネ</div></div>
<div class="c p" style="left:1162px"><div class="t">11/28 5阪⑧<b>カノーS</b> OP</div><i class="f">6</i><div class="tm">芝ダ <b>2061</b>小沢大56 内内</div><div class="l3">37.8Ⓜ36.9④ ⑫⑬⑬ 後方待機</div><div class="l4">16ト11 ①ショウナンナ 1.1</div><div class="l5">-2.7→-3.4→478K</div><b class="k">57</b><span class="m">51<br>51</span><div class="g">良 平 EGHネ頭</div></div>
<div class="c p" style="left:1353px"><div class="t">12/23 那②<b>名古屋グ</b> II</div><i class="f">6</i><div class="tm">芝ダ <b>2471</b>小沢大56</div><div class="l3">40.5&nbsp;&nbsp;&nbsp;⑥⑥⑥ 追い通し</div><div class="l4">11ト5 ⑤ヴェルテッ 1.7</div><div class="l5">&nbsp;&nbsp;&nbsp;&nbsp;&nbsp;&nbsp;&nbsp;&nbsp;&nbsp;&nbsp;&nbsp;483K</div><b class="k">59</b><span class="m"></span><div class="g"></div></div>
<div class="c ss"><div class="sr" style="top:0"><b>阪ダ</b>1002</div><div class="sr" style="top:16px"><b>京ダ</b>0033</div><div class="sr" style="top:33px"><b>全右</b>1156</div><div class="sr" style="top:49px;background:#bbb"><b>全</b>41610</div><div class="sr" style="top:66px;background:#555;color:#fff"><b>重不</b>1032</div></div>
<div class="c cl"><div class="L" style="left:4px;top:8px;line-height:17px;white-space:normal;width:10px">0 1 0 4</div></div>
<div class="c vn">⑥ドスハーツ</div>
</div>

<!-- Row 7 -->
<div class="r" style="top:638.4px">
<div class="c wk" style="background:#2b6cc0"><div class="wb">4</div></div>
<div class="c ub">7</div>
<div class="c od"><div class="L" style="right:2px;top:2px">16.1⑦</div><div class="L" style="right:4px;top:19px">75 66</div><div class="L" style="left:4px;top:36px;font-size:15px">………</div><div class="L" style="left:14px;top:66px;font-size:13px">中９週</div></div>
<div class="c nm"><div class="L" style="left:3px;top:2px;font-size:13px">マジェスティックウォリアー エー 牡5</div><div class="L" style="left:3px;top:18px;font-size:11px">シアトルスルー系&nbsp;&nbsp;&nbsp;&nbsp;&nbsp;&nbsp;&nbsp;&nbsp;&nbsp;&nbsp;&nbsp;&nbsp;2017年2月13日</div><div class="L" style="left:18px;top:32px;font-size:21px;font-weight:bold">ライトウォーリア</div><div class="L" style="left:3px;top:56px;font-size:10px">㈲キャロットファーム ノーザンファーム</div><div class="L" style="left:3px;top:69px;font-size:12px">スペクトロライト ディープイン 鹿毛</div></div>
<div class="c jk"><div class="L" style="left:4px;top:2px;font-size:13px">替 9.3%</div><div class="L" style="left:4px;top:14px;font-size:16px;font-weight:bold">西村淳</div><div class="L" style="left:22px;top:30px;font-size:15px">57</div><div class="L" style="left:14px;top:45px;font-size:14px">30勝</div><div class="L" style="left:12px;top:59px;font-size:11px">(18位)</div><div class="L" style="left:3px;top:70px;font-size:13px;font-weight:bold">初</div></div>
<div class="c tr"><div class="L" style="left:8px;top:2px;font-size:18px;font-weight:bold">高野友<span style="font-size:12px;border:1px solid #000">栗</span></div><div class="L" style="left:10px;top:22px;font-size:14px">9勝 <small>(78位)</small></div><div class="hl" style="top:36px"></div><div class="L" style="left:2px;top:38px;font-size:13px">NFしがB①</div><div class="hl" style="top:53px"></div><div class="L" style="left:2px;top:56px;font-size:14px">調&nbsp;&nbsp;&nbsp;5.3&nbsp;&nbsp;&nbsp;<span style="color:#e0161e">A</span></div><div class="hl" style="top:68px"></div><div class="L" style="left:2px;top:70px;font-size:14px">厩&nbsp;&nbsp;-7.6&nbsp;&nbsp;&nbsp;B</div></div>
<div class="c id"><div class="idh">58</div><div class="ir" style="top:20px"><i>テ</i>1.0⑥</div><div class="ir" style="top:36px"><i>位</i>-0.1⑩</div><div class="ir" style="top:53px"><i>上</i>-5.3⑮</div><div class="ir" style="top:69px"><i>ペ</i>15.4②</div></div>
<div class="c ck"><div class="L" style="left:6px;top:3px">0</div><div class="L" style="left:6px;top:24px">0</div><div class="L" style="left:6px;top:45px">0</div><div class="L" style="left:6px;top:67px">0</div></div>
<div class="c cr"><div class="L" style="left:2px;top:3px">芝 0 0 0 0</div><div class="L" style="left:2px;top:19px">重 0 0 0 0</div><div class="L" style="left:2px;top:35px">天 5 1 1 5</div><div class="L" style="left:2px;top:51px">千 0 0 0 0</div><div class="hl" style="top:66px"></div><div class="L" style="left:10px;top:69px">0 0 0 0</div></div>
<div class="c ds"><div class="L" style="left:20px;top:4px">・・・・・</div><div class="L" style="left:20px;top:20px">・・・・・</div><div class="L" style="left:2px;top:36px">67阪① 4才10月</div><div class="L" style="left:20px;top:52px">・・・・・</div><div class="hl" style="top:66px"></div><div class="L" style="left:20px;top:70px">・・・・・</div></div>
<div class="c st"><div class="L" style="left:1px;top:3px">逃げ◎</div><div class="L" style="left:4px;top:19px">中</div><div class="L" style="left:0;top:35px">中標起</div><div class="L" style="left:5px;top:51px">普通</div><div class="L" style="left:5px;top:69px">普通</div></div>
<div class="c p" style="left:780px"><div class="t">11/28 5阪⑧<b>カノーS</b> OP</div><i class="f">1</i><div class="tm">芝ダ <b>2066</b>松若風56 内内</div><div class="l3">35.7Ⓜ38.9⑮ ①①①① 距離長</div><div class="l4">16ト12 ③ショウナンナ 1.6</div><div class="l5">20.8↑13.5→504K</div><b class="k">57</b><span class="m">70<br>72</span><div class="g">良 ○3.3 平 EHネバ</div></div>
<div class="c p" style="left:971px"><div class="t">12/23 那①<b>名古屋グ</b> II</div><i class="f">8</i><div class="tm">芝ダ <b>2483</b>岩田望56</div><div class="l3">42.6&nbsp;&nbsp;&nbsp;&nbsp;②②④ スタミ×</div><div class="l4">11ト5 ③ヴェルテック 2.9</div><div class="l5">&nbsp;&nbsp;&nbsp;&nbsp;&nbsp;&nbsp;&nbsp;&nbsp;&nbsp;&nbsp;&nbsp;&nbsp;509K</div><b class="k">51</b><span class="m"></span><div class="g"></div></div>
<div class="c p" style="left:1162px"><div class="t">2/8 佐①<b>佐賀記念</b> III</div><i class="f">5</i><div class="tm">芝ダ <b>2110</b>岩田望56</div><div class="l3">42.2&nbsp;&nbsp;&nbsp;③③④④ 追い通し</div><div class="l4">11ト8 ③ケイアイパー 4.4</div><div class="l5">&nbsp;&nbsp;&nbsp;&nbsp;&nbsp;&nbsp;&nbsp;&nbsp;&nbsp;&nbsp;&nbsp;&nbsp;508K</div><b class="k">34</b><span class="m"></span><div class="g"></div></div>
<div class="c p" style="left:1353px"><div class="t">4/17 2阪⑧<b>アンタS</b> III</div><i class="f">12</i><div class="tm">芝ダ <b>1520</b>松若風56 内外</div><div class="l3">35.7Ⓜ38.5④ ②②②② 4角一杯</div><div class="l4">16ト2 ⑪オメガパフュ 1.5</div><div class="l5">-8.1→-11.6→506K</div><b class="k">58</b><span class="m">50<br>63</span><div class="g">良 平 ブEHネバ</div></div>
<div class="c ss"><div class="sr" style="top:0"><b>阪ダ</b>4002</div><div class="sr" style="top:16px"><b>京ダ</b>0201</div><div class="sr" style="top:33px"><b>全右</b>5117</div><div class="sr" style="top:49px;background:#bbb"><b>全</b>5119</div><div class="sr" style="top:66px;background:#555;color:#fff"><b>重不</b>1012</div></div>
<div class="c cl"><div class="L" style="left:4px;top:8px;line-height:17px;white-space:normal;width:10px">0 0 0 2</div></div>
<div class="c vn">⑦ライトウ</div>
</div>

<!-- Row 8 -->
<div class="r" style="top:721.8px">
<div class="c wk" style="background:#2b6cc0"><div class="wb">4</div></div>
<div class="c ub">8</div>
<div class="c od"><div class="L" style="right:2px;top:2px">93.9⑯</div><div class="L" style="right:4px;top:19px">53 61</div><div class="L" style="left:4px;top:36px;font-size:15px">………</div><div class="L" style="left:0;top:64px;width:60px;height:18px;background:#111;color:#fff;font-size:13px;padding:2px 0 0 10px">中13週</div></div>
<div class="c nm"><div class="L" style="left:3px;top:2px;font-size:13px">ネオユニヴァース サンデーサイ 牡6</div><div class="L" style="left:3px;top:18px;font-size:11px">サンデーサイレンス系&nbsp;&nbsp;&nbsp;&nbsp;&nbsp;&nbsp;&nbsp;2016年4月11日</div><div class="L" style="left:18px;top:32px;font-size:21px;font-weight:bold">スナークスター</div><div class="L" style="left:3px;top:56px;font-size:10px">杉本 豊氏 小泉牧場</div><div class="L" style="left:3px;top:69px;font-size:12px">スナークヒロイン サクラバクシ 鹿毛</div></div>
<div class="c jk"><div class="L" style="left:4px;top:2px;font-size:13px">替 1.8%</div><div class="L" style="left:4px;top:14px;font-size:16px;font-weight:bold">富田暁</div><div class="L" style="left:22px;top:30px;font-size:15px">56</div><div class="L" style="left:14px;top:45px;font-size:14px">20勝</div><div class="L" style="left:12px;top:59px;font-size:11px">(30位)</div><div class="L" style="left:3px;top:70px;font-size:13px;font-weight:bold">初</div></div>
<div class="c tr"><div class="L" style="left:8px;top:2px;font-size:18px;font-weight:bold">川村禎<span style="font-size:12px;border:1px solid #000">栗</span></div><div class="L" style="left:10px;top:22px;font-size:14px">1勝 <small>(185位)</small></div><div class="hl" style="top:36px"></div><div class="L" style="left:2px;top:38px;font-size:13px">浅井牧場⑤C</div><div class="hl" style="top:53px"></div><div class="L" style="left:2px;top:56px;font-size:14px">調&nbsp;&nbsp;-11.4&nbsp;&nbsp;B</div><div class="hl" style="top:68px"></div><div class="L" style="left:2px;top:70px;font-size:14px">厩&nbsp;&nbsp;-10.6&nbsp;&nbsp;B</div></div>
<div class="c id"><div class="idh">50</div><div class="ir" style="top:20px"><i>テ</i>-3.6⑩</div><div class="ir" style="top:36px"><i>位</i>-7.0⑪</div><div class="ir" style="top:53px"><i>上</i>1.4⑩</div><div class="ir" style="top:69px"><i>ペ</i>-2.8⑮</div></div>
<div class="c ck"><div class="L" style="left:6px;top:3px">0</div><div class="L" style="left:6px;top:24px">0</div><div class="L" style="left:6px;top:45px">0</div><div class="L" style="left:6px;top:67px">0</div></div>
<div class="c cr"><div class="L" style="left:2px;top:3px">芝 0 0 0 5</div><div class="L" style="left:2px;top:19px">重 4 5 3 14</div><div class="L" style="left:2px;top:35px">天 0 0 0 0</div><div class="L" style="left:2px;top:51px">千 0 0 0 0</div><div class="hl" style="top:66px"></div><div class="L" style="left:10px;top:69px">0 0 0 0</div></div>
<div class="c ds"><div class="L" style="left:2px;top:4px">59名⑨ 6才1月</div><div class="L" style="left:2px;top:20px">63新① 5才4月</div><div class="L" style="left:20px;top:36px">・・・・・</div><div class="L" style="left:20px;top:52px">・・・・・</div><div class="hl" style="top:66px"></div><div class="L" style="left:2px;top:71px;font-size:9px;font-weight:normal">52M⑦1250 4才11月</div></div>
<div class="c st"><div class="L" style="left:1px;top:3px">差し◎</div><div class="L" style="left:4px;top:19px">中</div><div class="L" style="left:0;top:35px">小ペダ</div><div class="L" style="left:5px;top:51px">普通</div><div class="L" style="left:5px;top:69px">普通</div></div>
<div class="c p" style="left:780px"><div class="t">12/5 6阪②<b>ギャラS</b> OP</div><i class="f">15</i><div class="tm">芝ダ <b>1256</b>小崎綾56 中内</div><div class="l3">35.2Ⓗ38.4⑬ ⑨⑨⑨ 追い通し</div><div class="l4">16ト7 ⑯バティスティ 1.7</div><div class="l5">-11.4→-9.1→470K</div><b class="k">46</b><span class="m">52<br>52</span><div class="g">良 平 面R舌ネバ</div></div>
<div class="c p" style="left:971px"><div class="t">1/8 1名②<b>すばるS</b> L</div><i class="f">9</i><div class="tm">芝ダ <b>1248</b>鮫島駿56 外中</div><div class="l3">35.4Ⓗ37.7⑥ ⑮⑭⑬ スタ芝×</div><div class="l4">16ト7 ⑯ピンシャン 1.0</div><div class="l5">-11.6→-9.2→468K</div><b class="k">59</b><span class="m">59<br>59</span><div class="g">良 平 面舌ネバ</div></div>
<div class="c p" style="left:1162px"><div class="t">1/16 小②<b>門司S</b> OP</div><i class="f">10</i><div class="tm">芝ダ <b>1466</b>中井裕57 外内</div><div class="l3">36.8Ⓜ38.0②③④⑥⑤ 先行力</div><div class="l4">16ト13 ⑬エクレアスパ 1.6</div><div class="l5">-12.3→-16.8→468K</div><b class="k">52</b><span class="m">59<br>59</span><div class="g">良 平 面R舌ネバ</div></div>
<div class="c p" style="left:1353px"><div class="t">3/20 2中❼<b>千葉S</b> OP</div><i class="f">16</i><div class="tm">芝ダ <b>1116</b>永野猛53 内内</div><div class="l3">34.6Ⓜ37.0④ ⑨⑩⑩ ゴチャ</div><div class="l4">16ト12 ②スマートダン 1.6</div><div class="l5">-12.9→-8.1→466K</div><b class="k">48</b><span class="m">58<br>53</span><div class="g">良 平 面G舌ネバ</div></div>
<div class="c ss"><div class="sr" style="top:0"><b>阪ダ</b>0008</div><div class="sr" style="top:16px"><b>京ダ</b>2033</div><div class="sr" style="top:33px"><b>全右</b>4322</div><div class="sr" style="top:49px;background:#bbb"><b>全</b>45322</div><div class="sr" style="top:66px;background:#555;color:#fff"><b>重不</b>0014</div></div>
<div class="c cl"><div class="L" style="left:4px;top:8px;line-height:17px;white-space:normal;width:10px">0 0 0 9</div></div>
<div class="c vn">⑧スナークス</div>
</div>

<!-- Row 9 -->
<div class="r" style="top:805.2px">
<div class="c wk" style="background:#f5e000"><div class="wb">5</div></div>
<div class="c ub">9</div>
<div class="c od"><div class="L" style="right:2px;top:2px">21.7⑧</div><div class="L" style="right:4px;top:19px">53 62</div><div class="L" style="left:4px;top:36px;font-size:15px">………</div><div class="L" style="left:14px;top:66px;font-size:13px">中５週</div></div>
<div class="c nm"><div class="L" style="left:3px;top:2px;font-size:13px">ヘニーヒューズ ヘネシー&nbsp;&nbsp;&nbsp;&nbsp;&nbsp;&nbsp;&nbsp;&nbsp;&nbsp;&nbsp;&nbsp;&nbsp;牝4</div><div class="L" style="left:3px;top:18px;font-size:11px">ストームバード系&nbsp;&nbsp;&nbsp;&nbsp;&nbsp;&nbsp;&nbsp;&nbsp;&nbsp;&nbsp;&nbsp;&nbsp;&nbsp;2018年3月2日</div><div class="L" style="left:18px;top:32px;font-size:21px;font-weight:bold">ゼンノアンジュ</div><div class="L" style="left:3px;top:56px;font-size:10px">大迫 久美子氏 川島牧場</div><div class="L" style="left:3px;top:69px;font-size:12px">ゼンノアンジェラス ペルトリー 鹿毛</div></div>
<div class="c jk"><div class="L" style="left:4px;top:2px;font-size:13px">替 6.4%</div><div class="L" style="left:4px;top:14px;font-size:16px;font-weight:bold">岩田望</div><div class="L" style="left:22px;top:30px;font-size:15px">54</div><div class="L" style="left:14px;top:45px;font-size:14px">60勝</div><div class="L" style="left:14px;top:59px;font-size:11px">(4位)</div><div class="L" style="left:3px;top:70px;font-size:13px;font-weight:bold">1 0 0 1</div></div>
<div class="c tr"><div class="L" style="left:8px;top:2px;font-size:18px;font-weight:bold">中村直<span style="font-size:12px;border:1px solid #000">栗</span></div><div class="L" style="left:10px;top:22px;font-size:14px">4勝 <small>(150位)</small></div><div class="hl" style="top:36px"></div><div class="L" style="left:2px;top:38px;font-size:13px">宇治田原①C</div><div class="hl" style="top:53px"></div><div class="L" style="left:2px;top:56px;font-size:14px">調&nbsp;&nbsp;-7.0&nbsp;&nbsp;&nbsp;B</div><div class="hl" style="top:68px"></div><div class="L" style="left:2px;top:70px;font-size:14px">厩&nbsp;&nbsp;-6.7&nbsp;&nbsp;&nbsp;B</div></div>
<div class="c id"><div class="idh">58</div><div class="ir" style="top:20px"><i>テ</i>-1.6⑧</div><div class="ir" style="top:36px"><i>位</i>-6.2⑨</div><div class="ir" style="top:53px"><i>上</i>1.4⑪</div><div class="ir" style="top:69px"><i>ペ</i>6.7⑦</div></div>
<div class="c ck"><div class="L" style="left:6px;top:3px">0</div><div class="L" style="left:6px;top:24px">0</div><div class="L" style="left:6px;top:45px">0</div><div class="L" style="left:6px;top:67px">0</div></div>
<div class="c cr"><div class="L" style="left:2px;top:3px">芝 2 0 0 5</div><div class="L" style="left:2px;top:19px">重 1 1 0 2</div><div class="L" style="left:2px;top:35px">天 0 0 0 0</div><div class="L" style="left:2px;top:51px">千 1 0 0 0</div><div class="hl" style="top:66px"></div><div class="L" style="left:10px;top:69px">0 0 2 2</div></div>
<div class="c ds"><div class="L" style="left:2px;top:4px">57東① 2才10月</div><div class="L" style="left:2px;top:20px">65阪① 3才12月</div><div class="L" style="left:20px;top:36px">・・・・・</div><div class="L" style="left:2px;top:52px">61札① 3才8月</div><div class="hl" style="top:66px"></div><div class="L" style="left:2px;top:71px;font-size:9px;font-weight:normal">37H⑥1258 3才8月</div></div>
<div class="c st"><div class="L" style="left:1px;top:3px">差し◎</div><div class="L" style="left:4px;top:19px">短理</div><div class="L" style="left:0;top:35px">中ペダ</div><div class="L" style="left:5px;top:51px">普通</div><div class="L" style="left:5px;top:69px">普通</div></div>
<div class="c p" style="left:780px"><div class="t">1/8 1名②<b>すばるS</b> L</div><i class="f">11</i><div class="tm">芝ダ <b>1249</b>武&nbsp;&nbsp;豊53 中外</div><div class="l3">34.7Ⓗ38.4⑪ ⑩⑦⑩ 直追止め</div><div class="l4">16ト8 ⑦ピンシャン 1.1</div><div class="l5">-6.1→14.0→502K</div><b class="k">56</b><span class="m">42<br>46</span><div class="g">良 注 2.1 面EGHネ</div></div>
<div class="c p" style="left:971px"><div class="t">3/20 2中❼<b>千葉S</b> OP</div><i class="f">4</i><div class="tm">芝ダ <b>1102</b>岩田望52 内内</div><div class="l3">34.3Ⓜ35.9④ ⑦⑧⑥ 立回り○</div><div class="l4">16ト6 ⑤スマートダン 0.2</div><div class="l5">1.9→0.1→494K</div><b class="k">62</b><span class="m">36<br>45</span><div class="g">良 ○3.6 平 面EGHネ</div></div>
<div class="c p" style="left:1162px"><div class="t">4/30 2阪⑪<b>天王山S</b> OP</div><i class="f">4</i><div class="tm">芝ダ <b>1113</b>幸英明54 外内</div><div class="l3">34.7Ⓜ36.1⑤ ⑤③③ 距離長</div><div class="l4">16ト10 ⑥デュアリスト 0.8</div><div class="l5">4.8→0.8→496K</div><b class="k">55</b><span class="m">55<br>55</span><div class="g">良 平 面EGHネ</div></div>
<div class="c p" style="left:1353px"><div class="t">5/15 3名④<b>栗東S</b> L</div><i class="f">9</i><div class="tm">芝ダ <b>1238</b>藤懸貴52 外内</div><div class="l3">35.2Ⓗ37.4④ ⑧⑪⑫ R中頭痛</div><div class="l4">16ト16 ⑮レディバグ 0.8</div><div class="l5">-11.5→-10.2→494K</div><b class="k">57</b><span class="m">51<br>61</span><div class="g">良 平 面EGHネ</div></div>
<div class="c ss"><div class="sr" style="top:0"><b>阪ダ</b>1003</div><div class="sr" style="top:16px"><b>京ダ</b>1000</div><div class="sr" style="top:33px"><b>全右</b>1006</div><div class="sr" style="top:49px;background:#bbb"><b>全</b>41010</div><div class="sr" style="top:66px;background:#555;color:#fff"><b>重不</b>0002</div></div>
<div class="c cl"><div class="L" style="left:4px;top:8px;line-height:17px;white-space:normal;width:10px">0 0 0 7</div></div>
<div class="c vn">⑨ゼンノアン</div>
</div>

<!-- Row 10 -->
<div class="r" style="top:888.6px">
<div class="c wk" style="background:#f5e000"><div class="wb">5</div></div>
<div class="c ub" style="font-size:13px">10</div>
<div class="c od"><div class="L" style="right:2px;top:2px">40.0⑬</div><div class="L" style="right:4px;top:19px">58 60</div><div class="L" style="left:4px;top:36px;font-size:15px">………</div><div class="L" style="left:14px;top:66px;font-size:13px">中５週</div></div>
<div class="c nm"><div class="L" style="left:3px;top:2px;font-size:13px">キンシャサノキセキ フジキセキ 牝5</div><div class="L" style="left:3px;top:18px;font-size:11px">ヘイロー系&nbsp;&nbsp;&nbsp;&nbsp;&nbsp;&nbsp;&nbsp;&nbsp;&nbsp;&nbsp;&nbsp;&nbsp;&nbsp;&nbsp;&nbsp;&nbsp;&nbsp;&nbsp;&nbsp;&nbsp;2017年1月15日</div><div class="L" style="left:18px;top:32px;font-size:21px;font-weight:bold">ブリマジア</div><div class="L" style="left:3px;top:56px;font-size:10px">藤沼 利夫氏 スガタ牧場</div><div class="L" style="left:3px;top:69px;font-size:12px">オートキュイジーヌ フレンチデ 鹿毛</div></div>
<div class="c jk"><div class="L" style="left:4px;top:2px;font-size:13px">替 3.5%</div><div class="L" style="left:4px;top:14px;font-size:16px;font-weight:bold">荻野極</div><div class="L" style="left:22px;top:30px;font-size:15px">56</div><div class="L" style="left:14px;top:45px;font-size:14px">15勝</div><div class="L" style="left:12px;top:59px;font-size:11px">(40位)</div><div class="L" style="left:3px;top:70px;font-size:13px;font-weight:bold">1 0 0 1</div></div>
<div class="c tr"><div class="L" style="left:8px;top:2px;font-size:18px;font-weight:bold">金成貴<span style="font-size:12px;border:1px solid #000">栗</span></div><div class="L" style="left:10px;top:22px;font-size:14px">6勝 <small>(120位)</small></div><div class="hl" style="top:36px"></div><div class="L" style="left:2px;top:38px;font-size:13px">TomF①E</div><div class="hl" style="top:53px"></div><div class="L" style="left:2px;top:56px;font-size:14px">調&nbsp;&nbsp;-11.3&nbsp;&nbsp;B</div><div class="hl" style="top:68px"></div><div class="L" style="left:2px;top:70px;font-size:14px">厩&nbsp;&nbsp;-10.5&nbsp;&nbsp;B</div></div>
<div class="c id"><div class="idh">59</div><div class="ir" style="top:20px"><i>テ</i>-0.6⑦</div><div class="ir" style="top:36px"><i>位</i>-6.4⑩</div><div class="ir" style="top:53px"><i>上</i>0.7⑫</div><div class="ir" style="top:69px"><i>ペ</i>9.7④</div></div>
<div class="c ck"><div class="L" style="left:6px;top:3px">0</div><div class="L" style="left:6px;top:24px">0</div><div class="L" style="left:6px;top:45px">0</div><div class="L" style="left:6px;top:67px">0</div></div>
<div class="c cr"><div class="L" style="left:2px;top:3px">芝 4 0 1 7</div><div class="L" style="left:2px;top:19px">重 0 0 0 3</div><div class="L" style="left:2px;top:35px">天 0 0 0 0</div><div class="L" style="left:2px;top:51px">千 0 0 0 0</div><div class="hl" style="top:66px"></div><div class="L" style="left:10px;top:69px">0 0 0 2</div></div>
<div class="c ds"><div class="L" style="left:2px;top:4px">63名① 5才3月</div><div class="L" style="left:20px;top:20px">・・・・・</div><div class="L" style="left:20px;top:36px">・・・・・</div><div class="L" style="left:20px;top:52px">・・・・・</div><div class="hl" style="top:66px"></div><div class="L" style="left:2px;top:71px;font-size:9px;font-weight:normal">57M⑤1245 4才10月</div></div>
<div class="c st"><div class="L" style="left:1px;top:3px">追込△</div><div class="L" style="left:4px;top:19px">嘔</div><div class="L" style="left:0;top:35px">小ペダ</div><div class="L" style="left:5px;top:51px">短い</div><div class="L" style="left:5px;top:69px">普通</div></div>
<div class="c p" style="left:780px"><div class="t">10/24 4阪❻<b>大王寺S</b> OP</div><i class="f">5</i><div class="tm">芝ダ <b>1245</b>田辺裕55 内内</div><div class="l3">36.3Ⓜ36.1❶⑬⑬⑬ 距離</div><div class="l4">16ト12 ①ケンシンコウ 0.3</div><div class="l5">12.1→13.5→468K</div><b class="k">57</b><span class="m">60<br>54</span><div class="g">良 ○2.3 平 面EH舌ネ</div></div>
<div class="c p" style="left:971px"><div class="t">1/29 1東①<b>白嶺S</b> 3勝</div><i class="f">5</i><div class="tm">芝ダ <b>1367</b>田辺裕55 外中</div><div class="l3">36.8Ⓜ35.5❶ ⑧⑪⑨ 立回り○</div><div class="l4">16ト6 ③ヒロシゲゴー 0.6</div><div class="l5">8.3→14.5→476K</div><b class="k">60</b><span class="m">53<br>53</span><div class="g">良 注 2.2 平 面EGH舌ネ</div></div>
<div class="c p" style="left:1162px"><div class="t">3/12 2中③<b>中京スポ</b> 3勝</div><i class="f fr">1</i><div class="tm">芝ダ <b>1237</b>荻野極55 男内</div><div class="l3">34.8Ⓜ37.3④ ⑧⑨⑨ 終い確実</div><div class="l4">16ト3 ③クラシカテソ 0.2</div><div class="l5">4.5↑12.5→470K</div><b class="k">63</b><span class="m">56<br>56</span><div class="g">良 △1.9 平 面EGH舌ネ</div></div>
<div class="c p" style="left:1353px"><div class="t">5/15 3名④<b>栗東S</b> L</div><i class="f">10</i><div class="tm">芝ダ <b>1239</b>富田暁56 男内</div><div class="l3">35.0Ⓜ37.3④ ⑪⑪⑨ ダッシュ</div><div class="l4">16ト6 ①レディバグ 0.9</div><div class="l5">1.6→-7.1→466K</div><b class="k">55</b><span class="m">55<br>55</span><div class="g">良 平 面EGH舌ネ</div></div>
<div class="c ss"><div class="sr" style="top:0"><b>阪ダ</b>1001</div><div class="sr" style="top:16px"><b>京ダ</b>0000</div><div class="sr" style="top:33px"><b>全右</b>1004</div><div class="sr" style="top:49px;background:#bbb"><b>全</b>42411</div><div class="sr" style="top:66px;background:#555;color:#fff"><b>重不</b>0004</div></div>
<div class="c cl"><div class="L" style="left:4px;top:8px;line-height:17px;white-space:normal;width:10px">0 0 0 4</div></div>
<div class="c vn">⑩ブリマジア</div>
</div>

<!-- Row 11 -->
<div class="r" style="top:972px">
<div class="c wk" style="background:#3a9a43"><div class="wb">6</div></div>
<div class="c ub" style="font-size:13px">11</div>
<div class="c od"><div class="L" style="left:0;top:0;width:60px;height:15px;background:#ffd27a"></div><div class="L" style="right:2px;top:2px">11.8④</div><div class="L" style="right:4px;top:19px">72 72</div><div class="L" style="left:4px;top:36px;font-size:16px">注☆☆</div><div class="L" style="left:14px;top:66px;font-size:13px">中７週</div></div>
<div class="c nm"><div class="L" style="left:3px;top:2px;font-size:13px">ヘニーヒューズ ヘネシー&nbsp;&nbsp;&nbsp;&nbsp;&nbsp;&nbsp;&nbsp;&nbsp;&nbsp;&nbsp;&nbsp;&nbsp;牡5</div><div class="L" style="left:3px;top:18px;font-size:11px">ストームバード系&nbsp;&nbsp;&nbsp;&nbsp;&nbsp;&nbsp;&nbsp;&nbsp;&nbsp;&nbsp;&nbsp;&nbsp;&nbsp;2017年4月10日</div><div class="L" style="left:18px;top:32px;font-size:21px;font-weight:bold">サダムスキャット</div><div class="L" style="left:3px;top:56px;font-size:10px">大西 美生子氏 猿橋牧場</div><div class="L" style="left:3px;top:69px;font-size:12px">レディーソルジャー マヤノトッ 栗毛</div></div>
<div class="c jk"><div class="L" style="left:10px;top:2px;font-size:13px">14.2%</div><div class="L" style="left:4px;top:14px;font-size:16px;font-weight:bold">秋山真</div><div class="L" style="left:22px;top:30px;font-size:15px">54</div><div class="L" style="left:14px;top:45px;font-size:14px">12勝</div><div class="L" style="left:12px;top:59px;font-size:11px">(46位)</div><div class="L" style="left:3px;top:70px;font-size:13px;font-weight:bold">0 0 1 0</div></div>
<div class="c tr"><div class="L" style="left:8px;top:2px;font-size:18px;font-weight:bold">中尾秀<span style="font-size:12px;border:1px solid #000">栗</span></div><div class="L" style="left:10px;top:22px;font-size:14px">14勝 <small>(31位)</small></div><div class="hl" style="top:36px"></div><div class="L" style="left:2px;top:38px;font-size:13px">吉澤WE①D</div><div class="hl" style="top:53px"></div><div class="L" style="left:2px;top:56px;font-size:14px">調&nbsp;&nbsp;&nbsp;6.8&nbsp;&nbsp;&nbsp;B</div><div class="hl" style="top:68px"></div><div class="L" style="left:2px;top:70px;font-size:14px">厩&nbsp;&nbsp;10.3&nbsp;&nbsp;&nbsp;A</div></div>
<div class="c id"><div class="idh">62</div><div class="ir" style="top:20px"><i>テ</i>2.6⑤</div><div class="ir" style="top:36px"><i>位</i>-5.1⑧</div><div class="ir" style="top:53px"><i>上</i>7.6⑥</div><div class="ir" style="top:69px"><i>ペ</i>4.5⑩</div></div>
<div class="c ck"><div class="L" style="left:6px;top:3px">0</div><div class="L" style="left:6px;top:24px">0</div><div class="L" style="left:6px;top:45px">0</div><div class="L" style="left:6px;top:67px">5</div></div>
<div class="c cr"><div class="L" style="left:2px;top:3px">芝 1 2 1 2</div><div class="L" style="left:2px;top:19px">重 3 3 1 2</div><div class="L" style="left:2px;top:35px">天 0 0 0 0</div><div class="L" style="left:2px;top:51px">千 0 0 0 0</div><div class="hl" style="top:66px"></div><div class="L" style="left:10px;top:69px">0 0 0 0</div></div>
<div class="c ds"><div class="L" style="left:2px;top:4px">59阪③ 4才3月</div><div class="L" style="left:2px;top:20px">62阪② 4才12月</div><div class="L" style="left:20px;top:36px">・・・・・</div><div class="L" style="left:20px;top:52px">・・・・・</div><div class="hl" style="top:66px"></div><div class="L" style="left:2px;top:71px;font-size:9px;font-weight:normal">59H③1236 4才3月</div></div>
<div class="c st"><div class="L" style="left:1px;top:3px">逃げ◎</div><div class="L" style="left:4px;top:19px">短理</div><div class="L" style="left:0;top:35px">中ペダ</div><div class="L" style="left:5px;top:51px">普通</div><div class="L" style="left:5px;top:69px">普通</div></div>
<div class="c p" style="left:780px"><div class="t">10/23 4阪⑤<b>大スポ杯</b> OP</div><i class="f">9</i><div class="tm">芝ダ <b>1116</b>川須栄55 外中</div><div class="l3">35.4Ⓜ36.2⑧ ⑥⑦⑥ 行たかる</div><div class="l4">16ト7 ①ウルトラマリ 0.6</div><div class="l5">13.8→30.0→476K</div><b class="k">61</b><span class="m">63<br>67</span><div class="g">良 △1.9 平 面Hネバ</div></div>
<div class="c p" style="left:971px"><div class="t">12/26 6阪⑧<b>りんくS</b> OP</div><i class="f fg">2</i><div class="tm">芝ダ <b>1111</b>川須栄52 外内</div><div class="l3">34.5Ⓗ36.6⑧ ⑤⑤⑤ 距離</div><div class="l4">16ト16 ②オーロラテソ 0.4</div><div class="l5">8.6→12.0→478K</div><b class="k">63</b><span class="m">66<br>65</span><div class="g">良 注 2.1 平 面Hネバ</div></div>
<div class="c p" style="left:1162px"><div class="t">3/20 2中❼<b>千葉S</b> OP</div><i class="f">6</i><div class="tm">芝ダ <b>1105</b>川須栄52 外外</div><div class="l3">34.2Ⓜ36.3④ ⑥⑥⑧ ゴチャ</div><div class="l4">16ト10 ⑥スマートダン 0.5</div><div class="l5">12.5→9.8→470K</div><b class="k">58</b><span class="m">62<br>62</span><div class="g">良 平 面Hネバ</div></div>
<div class="c p" style="left:1353px"><div class="t">4/30 2阪⑪<b>天王山S</b> OP</div><i class="f fb">3</i><div class="tm">芝ダ <b>1107</b>秋山真54 内内</div><div class="l3">35.0Ⓜ35.7④ ⑧⑦⑦ 踏く</div><div class="l4">16ト2 ⑦デュアリスト 0.2</div><div class="l5">3.0→22.9→476K</div><b class="k">61</b><span class="m">74<br>81</span><div class="g">良 注 2.1 平 面Hネバ</div></div>
<div class="c ss"><div class="sr" style="top:0"><b>阪ダ</b>1331</div><div class="sr" style="top:16px"><b>京ダ</b>0001</div><div class="sr" style="top:33px"><b>全右</b>4544</div><div class="sr" style="top:49px;background:#bbb"><b>全</b>4544</div><div class="sr" style="top:66px;background:#555;color:#fff"><b>重不</b>1211</div></div>
<div class="c cl"><div class="L" style="left:4px;top:8px;line-height:17px;white-space:normal;width:10px">1 0 1 5</div></div>
<div class="c vn">⑪サダムスキ</div>
</div>

<!-- Row 12 -->
<div class="r" style="top:1055.4px">
<div class="c wk" style="background:#3a9a43"><div class="wb">6</div></div>
<div class="c ub" style="font-size:13px">12</div>
<div class="c od"><div class="L" style="right:2px;top:2px">14.9⑥</div><div class="L" style="right:4px;top:19px">64 55</div><div class="L" style="left:2px;top:36px;font-size:16px">△○注</div><div class="L" style="left:14px;top:66px;font-size:13px">中７週</div></div>
<div class="c nm"><div class="L" style="left:3px;top:2px;font-size:13px">マジェスティックウォリアー エー 牡5</div><div class="L" style="left:3px;top:18px;font-size:11px">シアトルスルー系&nbsp;&nbsp;&nbsp;&nbsp;&nbsp;&nbsp;&nbsp;&nbsp;&nbsp;&nbsp;&nbsp;&nbsp;2017年2月15日</div><div class="L" style="left:18px;top:32px;font-size:21px;font-weight:bold">シゲルタイタン</div><div class="L" style="left:3px;top:56px;font-size:10px">森中 蕃氏 シンボリ牧場</div><div class="L" style="left:3px;top:69px;font-size:12px">メリーウェザー メジロベイリー 鹿毛</div></div>
<div class="c jk"><div class="L" style="left:4px;top:2px;font-size:13px">替 11.6%</div><div class="L" style="left:4px;top:14px;font-size:16px;font-weight:bold">松山弘</div><div class="L" style="left:22px;top:30px;font-size:15px">56</div><div class="L" style="left:14px;top:45px;font-size:14px">44勝</div><div class="L" style="left:14px;top:59px;font-size:11px">(6位)</div><div class="L" style="left:3px;top:70px;font-size:13px;font-weight:bold">0 1 0 1</div></div>
<div class="c tr"><div class="L" style="left:8px;top:2px;font-size:18px;font-weight:bold">伊藤圭<span style="font-size:12px;border:1px solid #000">美</span></div><div class="L" style="left:10px;top:22px;font-size:14px">14勝 <small>(28位)</small></div><div class="hl" style="top:36px"></div><div class="L" style="left:2px;top:38px;font-size:13px">松風馬事①D</div><div class="hl" style="top:53px"></div><div class="L" style="left:2px;top:56px;font-size:14px">調&nbsp;&nbsp;&nbsp;8.4&nbsp;&nbsp;&nbsp;B</div><div class="hl" style="top:68px"></div><div class="L" style="left:2px;top:70px;font-size:14px">厩&nbsp;&nbsp;&nbsp;5.0&nbsp;&nbsp;&nbsp;B</div></div>
<div class="c id"><div class="idh">○65</div><div class="ir" style="top:20px"><i>テ</i>6.2❸</div><div class="ir" style="top:36px"><i>位</i>-0.5②</div><div class="ir" style="top:53px"><i>上</i>5.1⑦</div><div class="ir" style="top:69px"><i>ペ</i>10.0③</div></div>
<div class="c ck"><div class="L" style="left:6px;top:3px">0</div><div class="L" style="left:6px;top:24px">0</div><div class="L" style="left:6px;top:45px">0</div><div class="L" style="left:6px;top:67px">4</div></div>
<div class="c cr"><div class="L" style="left:2px;top:3px">芝 2 4 1 4</div><div class="L" style="left:2px;top:19px">重 0 0 0 0</div><div class="L" style="left:2px;top:35px">天 1 0 0 1</div><div class="L" style="left:2px;top:51px">千 0 0 0 0</div><div class="hl" style="top:66px"></div><div class="L" style="left:10px;top:69px">2 1 1 1</div></div>
<div class="c ds"><div class="L" style="left:2px;top:4px">64阪① 5才3月</div><div class="L" style="left:20px;top:20px">・・・・・</div><div class="L" style="left:2px;top:36px">40中① 3才9月</div><div class="L" style="left:20px;top:52px">・・・・・</div><div class="hl" style="top:66px"></div><div class="L" style="left:2px;top:71px;font-size:9px;font-weight:normal">64M①1241 5才4月</div></div>
<div class="c st"><div class="L" style="left:1px;top:3px">先行◎</div><div class="L" style="left:4px;top:19px">嘔中</div><div class="L" style="left:0;top:35px">中標準</div><div class="L" style="left:5px;top:51px">普通</div><div class="L" style="left:5px;top:69px">普通</div></div>
<div class="c p" style="left:780px"><div class="t">2/6 1東④<b>銀蹄S</b> 3勝</div><i class="f">4</i><div class="tm">芝ダ <b>1252</b>石橋脩57 外中</div><div class="l3">35.9Ⓢ36.6⑦ ⑤⑤③ 道中外々</div><div class="l4">16ト2 ①ニュートンテ 0.6</div><div class="l5">19.5↗17.2→496K</div><b class="k">55</b><span class="m">68<br>67</span><div class="g">良 平 ブ面GRネバ</div></div>
<div class="c p" style="left:971px"><div class="t">2/19 1阪③<b>播磨S</b> 3勝</div><i class="f fb">3</i><div class="tm">芝ダ <b>1243</b>福永祐56 内外</div><div class="l3">34.8Ⓗ37.4⑨ ④④④ 立回り○</div><div class="l4">16ト16 ①アドマイヤル 0.4</div><div class="l5">8.2→8.7→492K</div><b class="k">61</b><span class="m">66<br>68</span><div class="g">良 △1.9 平 ブ面GRネバ</div></div>
<div class="c p" style="left:1162px"><div class="t">3/20 1阪⑫<b>鳴門S</b> 3勝</div><i class="f fg">2</i><div class="tm">芝ダ <b>1235</b>川田将57 内内</div><div class="l3">34.1Ⓗ37.4⑥ ①①① 二脚速い</div><div class="l4">16ト5 ①ケイアイドリ 0.4</div><div class="l5">16.0→13.7→492K</div><b class="k">57</b><span class="m">64<br>61</span><div class="g">良 平 ブ面GRネバ</div></div>
<div class="c p" style="left:1353px"><div class="t">4/16 2阪❼<b>天満橋S</b> 3勝</div><i class="f fr">1</i><div class="tm">芝ダ <b>1241</b>川田将57 外中</div><div class="l3">34.7Ⓗ37.2⑥ ②②② R振スム</div><div class="l4">16ト1 ⑥アイツテモ 0.1</div><div class="l5">19.1→18.0→492K</div><b class="k">64</b><span class="m">69<br>59</span><div class="g">良 平 ブ面GRネバ</div></div>
<div class="c ss"><div class="sr" style="top:0"><b>阪ダ</b>1211</div><div class="sr" style="top:16px"><b>京ダ</b>0101</div><div class="sr" style="top:33px"><b>全右</b>2101</div><div class="sr" style="top:49px;background:#bbb"><b>全</b>46413</div><div class="sr" style="top:66px;background:#555;color:#fff"><b>重不</b>0113</div></div>
<div class="c cl"><div class="L" style="left:4px;top:8px;line-height:17px;white-space:normal;width:10px">0 0 2 4</div></div>
<div class="c vn">⑫シゲルタイ</div>
</div>

<!-- Row 13 -->
<div class="r" style="top:1138.8px">
<div class="c wk" style="background:#f08a3c"><div class="wb">7</div></div>
<div class="c ub" style="font-size:13px">13</div>
<div class="c od"><div class="L" style="right:2px;top:2px">51.1⑮</div><div class="L" style="right:4px;top:19px">65 68</div><div class="L" style="left:4px;top:36px;font-size:15px">………</div><div class="L" style="left:14px;top:66px;font-size:13px">中５週</div></div>
<div class="c nm"><div class="L" style="left:3px;top:2px;font-size:13px">ダンカーク アンブライドルズソン 牡5</div><div class="L" style="left:3px;top:18px;font-size:11px">ミスタープロスペクター系&nbsp;&nbsp;&nbsp;&nbsp;2017年3月3日</div><div class="L" style="left:18px;top:32px;font-size:21px;font-weight:bold">メイショウテンスイ</div><div class="L" style="left:3px;top:56px;font-size:10px">松本 好雄氏 太陽牧場</div><div class="L" style="left:3px;top:69px;font-size:12px">フラワーガイア ゼンノロブロイ 栗毛</div></div>
<div class="c jk"><div class="L" style="left:14px;top:2px;font-size:13px">3.0%</div><div class="L" style="left:4px;top:14px;font-size:16px;font-weight:bold">太宰啓</div><div class="L" style="left:22px;top:30px;font-size:15px">57</div><div class="L" style="left:17px;top:45px;font-size:14px">4勝</div><div class="L" style="left:12px;top:59px;font-size:11px">(77位)</div><div class="L" style="left:3px;top:70px;font-size:13px;font-weight:bold">0 0 0 1</div></div>
<div class="c tr"><div class="L" style="left:8px;top:2px;font-size:18px;font-weight:bold">南井克<span style="font-size:12px;border:1px solid #000">栗</span></div><div class="L" style="left:10px;top:22px;font-size:14px">10勝 <small>(73位)</small></div><div class="hl" style="top:36px"></div><div class="L" style="left:2px;top:38px;font-size:13px">Cヒルズ①C</div><div class="hl" style="top:53px"></div><div class="L" style="left:2px;top:56px;font-size:14px">調&nbsp;&nbsp;-11.4&nbsp;&nbsp;B</div><div class="hl" style="top:68px"></div><div class="L" style="left:2px;top:70px;font-size:14px">厩&nbsp;&nbsp;-11.0&nbsp;&nbsp;B</div></div>
<div class="c id"><div class="idh">53</div><div class="ir" style="top:20px"><i>テ</i>10.2<span style="color:#e0161e">❶</span></div><div class="ir" style="top:36px"><i>位</i>-1.0③</div><div class="ir" style="top:53px"><i>上</i>-13.9⑯</div><div class="ir" style="top:69px"><i>ペ</i>18.1①</div></div>
<div class="c ck"><div class="L" style="left:6px;top:3px">0</div><div class="L" style="left:6px;top:24px">0</div><div class="L" style="left:6px;top:45px">0</div><div class="L" style="left:6px;top:67px">0</div></div>
<div class="c cr"><div class="L" style="left:2px;top:3px">芝 3 2 1 11</div><div class="L" style="left:2px;top:19px">重 0 0 0 0</div><div class="L" style="left:2px;top:35px">天 0 0 0 1</div><div class="L" style="left:2px;top:51px">千 0 0 0 0</div><div class="hl" style="top:66px"></div><div class="L" style="left:10px;top:69px">0 0 0 0</div></div>
<div class="c ds"><div class="L" style="left:2px;top:4px">70東② 3才11月</div><div class="L" style="left:2px;top:20px">53中① 3才12月</div><div class="L" style="left:20px;top:36px">・・・・・</div><div class="L" style="left:20px;top:52px">・・・・・</div><div class="hl" style="top:66px"></div><div class="L" style="left:2px;top:71px;font-size:9px;font-weight:normal">63H①1222 3才7月</div></div>
<div class="c st"><div class="L" style="left:1px;top:3px">逃げ◎</div><div class="L" style="left:4px;top:19px">短理</div><div class="L" style="left:0;top:35px">大ペダ</div><div class="L" style="left:5px;top:51px">短い</div><div class="L" style="left:5px;top:69px">普通</div></div>
<div class="c p" style="left:780px"><div class="t">11/14 5阪⑥<b>室町S</b> OP</div><i class="f">14</i><div class="tm">芝ダ <b>1129</b>武&nbsp;&nbsp;豊57 外外</div><div class="l3">33.6Ⓜ37.3④ ⑨⑩⑩ 後方まま</div><div class="l4">16ト1 ③デュアリスト 1.3</div><div class="l5">5.6→-10.3→532K</div><b class="k">52</b><span class="m">76<br>71</span><div class="g">良 平 面EH</div></div>
<div class="c p" style="left:971px"><div class="t">12/12 中❹<b>カペラS</b> III</div><i class="f">15</i><div class="tm">芝ダ <b>1113</b>江田照56 内内</div><div class="l3">33.5Ⓗ37.8⑤ ④⑥⑦ 時計速×</div><div class="l4">16ト11 ③ダンシング 7.1</div><div class="l5">-11.5→-10.3→520K</div><b class="k">53</b><span class="m">68<br>61</span><div class="g">良 平 面EH</div></div>
<div class="c p" style="left:1162px"><div class="t">3/12 1阪⑨<b>ポラリS</b> OP</div><i class="f">7</i><div class="tm">芝ダ <b>1244</b>秋山真57 内中</div><div class="l3">34.0Ⓗ38.4⑪ ②②② 二脚速い</div><div class="l4">16ト14 ②バティスティ 0.6</div><div class="l5">-9.0↗-10.2→536K</div><b class="k">59</b><span class="m">70<br>61</span><div class="g">良 平 面EH</div></div>
<div class="c p" style="left:1353px"><div class="t">5/15 3名④<b>栗東S</b> L</div><i class="f">13</i><div class="tm">芝ダ <b>1248</b>太宰啓57 内外</div><div class="l3">33.8Ⓗ39.2④ ②②④ 4角一杯</div><div class="l4">16ト16 ⑫レディバグ 1.6</div><div class="l5">-11.5→-10.2→534K</div><b class="k">48</b><span class="m">61<br>62</span><div class="g">良 平 面EH</div></div>
<div class="c ss"><div class="sr" style="top:0"><b>阪ダ</b>1009</div><div class="sr" style="top:16px"><b>京ダ</b>0002</div><div class="sr" style="top:33px"><b>全右</b>3004</div><div class="sr" style="top:49px;background:#bbb"><b>全</b>42114</div><div class="sr" style="top:66px;background:#555;color:#fff"><b>重不</b>3002</div></div>
<div class="c cl"><div class="L" style="left:4px;top:8px;line-height:17px;white-space:normal;width:10px">0 0 1 14</div></div>
<div class="c vn">⑬メイショウ</div>
</div>

<!-- Row 14 -->
<div class="r" style="top:1222.2px">
<div class="c wk" style="background:#f08a3c"><div class="wb">7</div></div>
<div class="c ub" style="font-size:13px">14</div>
<div class="c od"><div class="L" style="right:2px;top:2px">38.3⑫</div><div class="L" style="right:4px;top:19px">73 67</div><div class="L" style="left:4px;top:36px;font-size:15px">………</div><div class="L" style="left:14px;top:66px;font-size:13px">中３週</div></div>
<div class="c nm"><div class="L" style="left:3px;top:2px;font-size:13px">ロードカナロア キングカメハメハ 牡6</div><div class="L" style="left:3px;top:18px;font-size:11px">ミスタープロスペクター系&nbsp;&nbsp;&nbsp;&nbsp;2016年4月8日</div><div class="L" style="left:18px;top:32px;font-size:21px;font-weight:bold">ロードアクア</div><div class="L" style="left:3px;top:56px;font-size:10px">㈱ロードホースクラブ ケイアイファーム</div><div class="L" style="left:3px;top:69px;font-size:12px">オーシュペール ダイワメジャー 鹿毛</div></div>
<div class="c jk"><div class="L" style="left:4px;top:2px;font-size:13px">替 3.5%</div><div class="L" style="left:4px;top:14px;font-size:16px;font-weight:bold">坂井瑠</div><div class="L" style="left:22px;top:30px;font-size:15px">57</div><div class="L" style="left:14px;top:45px;font-size:14px">42勝</div><div class="L" style="left:14px;top:59px;font-size:11px">(8位)</div><div class="L" style="left:3px;top:70px;font-size:13px;font-weight:bold">初</div></div>
<div class="c tr"><div class="L" style="left:0;top:0;width:5px;height:20px;background:#9b7fc0"></div><div class="L" style="left:8px;top:2px;font-size:18px;font-weight:bold">中村直<span style="font-size:12px;border:1px solid #000">栗</span></div><div class="L" style="left:10px;top:22px;font-size:14px">4勝 <small>(150位)</small></div><div class="hl" style="top:36px"></div><div class="L" style="left:2px;top:38px;font-size:13px">宇治田原①C</div><div class="hl" style="top:53px"></div><div class="L" style="left:2px;top:56px;font-size:14px">調&nbsp;&nbsp;-11.4&nbsp;&nbsp;B</div><div class="hl" style="top:68px"></div><div class="L" style="left:2px;top:70px;font-size:14px">厩&nbsp;&nbsp;-10.2&nbsp;&nbsp;B</div></div>
<div class="c id"><div class="idh">56</div><div class="ir" style="top:20px"><i>テ</i>-4.9⑪</div><div class="ir" style="top:36px"><i>位</i>-1.8④</div><div class="ir" style="top:53px"><i>上</i>0.5⑬</div><div class="ir" style="top:69px"><i>ペ</i>4.3⑫</div></div>
<div class="c ck"><div class="L" style="left:6px;top:3px">0</div><div class="L" style="left:6px;top:24px">0</div><div class="L" style="left:6px;top:45px">0</div><div class="L" style="left:6px;top:67px">0</div></div>
<div class="c cr"><div class="L" style="left:2px;top:3px">芝 0 0 0 1</div><div class="L" style="left:2px;top:19px">重 1 0 0 0</div><div class="L" style="left:2px;top:35px">天 0 0 0 0</div><div class="L" style="left:2px;top:51px">千 0 0 0 0</div><div class="hl" style="top:66px"></div><div class="L" style="left:10px;top:69px">0 0 0 0</div></div>
<div class="c ds"><div class="L" style="left:2px;top:4px">57東⑥ 5才5月</div><div class="L" style="left:2px;top:20px">54中⑥ 4才4月</div><div class="L" style="left:20px;top:36px">・・・・・</div><div class="L" style="left:20px;top:52px">・・・・・</div><div class="hl" style="top:66px"></div><div class="L" style="left:20px;top:70px">・・・・・</div></div>
<div class="c st"><div class="L" style="left:1px;top:3px">追込△</div><div class="L" style="left:4px;top:19px">嘔</div><div class="L" style="left:0;top:35px">中標準</div><div class="L" style="left:5px;top:51px">普通</div><div class="L" style="left:5px;top:69px">普通</div></div>
<div class="c p" style="left:780px"><div class="t">12/18 6阪⑤<b>タンザS</b> OP</div><i class="f">13</i><div class="tm">芝ダ <b>B1098</b>団野大57 外外</div><div class="l3">34.5Ⓜ35.3③ ⑦⑦ アオル</div><div class="l4">16ト11 ⑥ナランフレア 1.3</div><div class="l5">-0.4→23.3→492K</div><b class="k">50</b><span class="m">42<br>42</span><div class="g">良 △1.9 平 面EGH舌ネバ</div></div>
<div class="c p" style="left:971px"><div class="t">2/13 2小②<b>北九州短</b> OP</div><i class="f">9</i><div class="tm">芝ダ <b>B1092</b>亀田温57 外外</div><div class="l3">33.2Ⓗ35.9⑥ ⑪⑩⑨⑧ ゲモたれ</div><div class="l4">16ト11 ⑮ビオグラフ 0.5</div><div class="l5">-11.9→-11.9→476K</div><b class="k">61</b><span class="m">46<br>46</span><div class="g">良 平 面EGH舌ネバ</div></div>
<div class="c p" style="left:1162px"><div class="t">4/17 3中⑧<b>京葉S</b> L</div><i class="f">8</i><div class="tm">芝ダ <b>1116</b>津村明57 外中</div><div class="l3">34.7Ⓜ36.9⑤ ⑨⑫⑫ 馬込み</div><div class="l4">16ト4 ③タガノビュー 0.5</div><div class="l5">-12.9→-7.9→480K</div><b class="k">54</b><span class="m">62<br>50</span><div class="g">良 平 面EGH舌ネバ</div></div>
<div class="c p" style="left:1353px"><div class="t">5/28 2東⑪<b>欅S</b> OP</div><i class="f">9</i><div class="tm">芝ダ <b>1241</b>菅原明57 外外</div><div class="l3">35.7Ⓜ36.0④ ①①① 先行力</div><div class="l4">16ト5 ③レモンポップ 0.6</div><div class="l5">0.8→4.5→468K</div><b class="k">57</b><span class="m">80<br>70</span><div class="g">良 平 面EGH舌ネバ</div></div>
<div class="c ss"><div class="sr" style="top:0"><b>阪ダ</b>0002</div><div class="sr" style="top:16px"><b>京ダ</b>1001</div><div class="sr" style="top:33px"><b>全右</b>2005</div><div class="sr" style="top:49px;background:#bbb"><b>全</b>50418</div><div class="sr" style="top:66px;background:#555;color:#fff"><b>重不</b>1002</div></div>
<div class="c cl"><div class="L" style="left:4px;top:8px;line-height:17px;white-space:normal;width:10px">0 0 1 0</div></div>
<div class="c vn">⑭ロードアク</div>
</div>

<!-- Row 15 -->
<div class="r" style="top:1305.6px">
<div class="c wk" style="background:#ef86b4"><div class="wb">8</div></div>
<div class="c ub" style="font-size:13px">15</div>
<div class="c od"><div class="L" style="left:0;top:0;width:60px;height:15px;background:#b9e4c4"></div><div class="L" style="right:2px;top:2px">5.0③</div><div class="L" style="right:4px;top:19px">58 60</div><div class="L" style="left:2px;top:36px;font-size:16px">▲◎○</div><div class="L" style="left:14px;top:66px;font-size:13px">中３週</div></div>
<div class="c nm"><div class="L" style="left:3px;top:2px;font-size:13px">ヘニーヒューズ ヘネシー&nbsp;&nbsp;&nbsp;&nbsp;&nbsp;&nbsp;&nbsp;&nbsp;&nbsp;&nbsp;&nbsp;&nbsp;牡5</div><div class="L" style="left:3px;top:18px;font-size:11px">ストームバード系&nbsp;&nbsp;&nbsp;&nbsp;&nbsp;&nbsp;&nbsp;&nbsp;&nbsp;&nbsp;&nbsp;&nbsp;&nbsp;2017年3月16日</div><div class="L" style="left:18px;top:32px;font-size:21px;font-weight:bold">タガノビューティー</div><div class="L" style="left:3px;top:56px;font-size:10px">八木 良司氏 新冠タガノファーム</div><div class="L" style="left:3px;top:69px;font-size:12px">スペシャルディナー スペシャル 栗毛</div></div>
<div class="c jk"><div class="L" style="left:10px;top:2px;font-size:13px">28.6%</div><div class="L" style="left:4px;top:14px;font-size:16px;font-weight:bold">石橋脩</div><div class="L" style="left:22px;top:30px;font-size:15px">58</div><div class="L" style="left:14px;top:45px;font-size:14px">15勝</div><div class="L" style="left:12px;top:59px;font-size:11px">(39位)</div><div class="L" style="left:3px;top:70px;font-size:13px;font-weight:bold">6 2 1 3</div></div>
<div class="c tr"><div class="L" style="left:0;top:0;width:5px;height:20px;background:#d9a98a"></div><div class="L" style="left:8px;top:2px;font-size:18px;font-weight:bold">西園正<span style="font-size:12px;border:1px solid #000">栗</span></div><div class="L" style="left:10px;top:22px;font-size:14px">19勝 <small>(12位)</small></div><div class="hl" style="top:36px"></div><div class="L" style="left:2px;top:38px;font-size:13px">宇治田原③<span style="color:#e0161e">A</span></div><div class="hl" style="top:53px"></div><div class="L" style="left:2px;top:56px;font-size:14px">調&nbsp;&nbsp;16.1&nbsp;&nbsp;&nbsp;B</div><div class="hl" style="top:68px"></div><div class="L" style="left:2px;top:70px;font-size:14px">厩&nbsp;&nbsp;15.1&nbsp;&nbsp;&nbsp;<span style="color:#e0161e">A</span></div></div>
<div class="c id"><div class="idh">▲65</div><div class="ir" style="top:20px"><i>テ</i>-9.8⑮</div><div class="ir" style="top:36px"><i>位</i>-7.7⑫</div><div class="ir" style="top:53px"><i>上</i>13.9❷</div><div class="ir" style="top:69px"><i>ペ</i>2.9⑬</div></div>
<div class="c ck"><div class="L" style="left:6px;top:3px">0</div><div class="L" style="left:6px;top:24px">3</div><div class="L" style="left:6px;top:45px">2</div><div class="L" style="left:6px;top:67px">0</div></div>
<div class="c cr"><div class="L" style="left:2px;top:3px">芝 2 2 2 2</div><div class="L" style="left:2px;top:19px">重 0 0 0 0</div><div class="L" style="left:2px;top:35px">天 1 1 0 0</div><div class="L" style="left:2px;top:51px">千 0 0 0 0</div><div class="hl" style="top:66px"></div><div class="L" style="left:10px;top:69px">0 0 1 2</div></div>
<div class="c ds"><div class="L" style="left:2px;top:4px">73東① 5才3月</div><div class="L" style="left:20px;top:20px">・・・・・</div><div class="L" style="left:2px;top:36px">60名② 4才12月</div><div class="L" style="left:20px;top:52px">・・・・・</div><div class="hl" style="top:66px"></div><div class="L" style="left:2px;top:71px;font-size:9px;font-weight:normal">67H③1240 4才12月</div></div>
<div class="c st"><div class="L" style="left:1px;top:3px">追込◎</div><div class="L" style="left:4px;top:19px">嘔中</div><div class="L" style="left:0;top:35px">小標起</div><div class="L" style="left:5px;top:51px">普通</div><div class="L" style="left:5px;top:69px">普通</div></div>
<div class="c p" style="left:780px"><div class="t">1/30 1東②<b>根岸S</b> III</div><i class="f fb">3</i><div class="tm">芝ダ <b>1234</b>津村明56 外中</div><div class="l3">36.5Ⓢ35.4❶❶⑯⑮ スタ悪い</div><div class="l4">16ト10 ③テイエムサウ 0.3</div><div class="l5">12.2→16.2→518K</div><b class="k">70</b><span class="m">57<br>58</span><div class="g">良 ○3.5 平 面EGH舌ネバ</div></div>
<div class="c p" style="left:971px"><div class="t">3/12 1阪⑨<b>ポラリS</b> OP</div><i class="f">6</i><div class="tm">芝ダ <b>1242</b>石橋脩58 奈外</div><div class="l3">36.2Ⓗ36.4❶❶⑯⑭⑫ 踏く</div><div class="l4">16ト7 ①バティスティ 0.4</div><div class="l5">17.6→17.5→522K</div><b class="k">66</b><span class="m">67<br>67</span><div class="g">良 平 面EGH舌ネバ</div></div>
<div class="c p" style="left:1162px"><div class="t">5/3 那①<b>かきつば</b> III</div><i class="f">4</i><div class="tm">芝ダ <b>1321</b>石橋脩57</div><div class="l3">37.5&nbsp;&nbsp;&nbsp;⑤⑤④ 立回り○</div><div class="l4">12ト2 ③イグナイター 0.3</div><div class="l5">&nbsp;&nbsp;&nbsp;&nbsp;&nbsp;&nbsp;&nbsp;&nbsp;&nbsp;&nbsp;&nbsp;&nbsp;522K</div><b class="k">66</b><span class="m"></span><div class="g"></div></div>
<div class="c p" style="left:1353px"><div class="t">5/28 2東⑪<b>欅S</b> OP</div><i class="f fg">2</i><div class="tm">芝ダ <b>1233</b>石橋脩58 内外</div><div class="l3">36.3Ⓜ34.7❷ ⑩⑧⑧ 追込み</div><div class="l4">16ト10 ⑥レモンポップ 0.4</div><div class="l5">16.5→18.6→516K</div><b class="k">67</b><span class="m">63<br>65</span><div class="g">良 平 面EGH舌ネバ</div></div>
<div class="c ss"><div class="sr" style="top:0"><b>阪ダ</b>2103</div><div class="sr" style="top:16px"><b>京ダ</b>1001</div><div class="sr" style="top:33px"><b>全右</b>3443</div><div class="sr" style="top:49px;background:#bbb"><b>全</b>6546</div><div class="sr" style="top:66px;background:#555;color:#fff"><b>重不</b>1001</div></div>
<div class="c cl"><div class="L" style="left:4px;top:8px;line-height:17px;white-space:normal;width:10px">2 1 0 3</div></div>
<div class="c vn">⑮タガノビュ</div>
</div>

<!-- Row 16 -->
<div class="r" style="top:1389px">
<div class="c wk" style="background:#ef86b4"><div class="wb">8</div></div>
<div class="c ub" style="font-size:13px">16</div>
<div class="c od"><div class="L" style="left:0;top:0;width:60px;height:15px;background:#b9d6f0"></div><div class="L" style="right:2px;top:2px">4.0②</div><div class="L" style="right:4px;top:19px">70 67</div><div class="L" style="left:2px;top:36px;font-size:16px">○○▲</div><div class="L" style="left:14px;top:66px;font-size:13px">中７週</div></div>
<div class="c nm"><div class="L" style="left:3px;top:2px;font-size:13px">ディープインパクト サンデーサイ 牡7</div><div class="L" style="left:3px;top:18px;font-size:11px">ヘイロー系&nbsp;&nbsp;&nbsp;&nbsp;&nbsp;&nbsp;&nbsp;&nbsp;&nbsp;&nbsp;&nbsp;&nbsp;&nbsp;&nbsp;&nbsp;&nbsp;&nbsp;&nbsp;&nbsp;&nbsp;2015年2月14日</div><div class="L" style="left:18px;top:32px;font-size:21px;font-weight:bold">グレートウォリアー</div><div class="L" style="left:3px;top:56px;font-size:10px">㈲サンデーレーシング ノーザンファーム</div><div class="L" style="left:3px;top:69px;font-size:12px">ブラウドスペル ブラウドシチズ 鹿毛</div></div>
<div class="c jk"><div class="L" style="left:10px;top:2px;font-size:13px">35.3%</div><div class="L" style="left:4px;top:14px;font-size:16px;font-weight:bold">福永祐</div><div class="L" style="left:22px;top:30px;font-size:15px">56</div><div class="L" style="left:14px;top:45px;font-size:14px">43勝</div><div class="L" style="left:14px;top:59px;font-size:11px">(7位)</div><div class="L" style="left:3px;top:70px;font-size:13px;font-weight:bold">2 0 3 2</div></div>
<div class="c tr"><div class="L" style="left:8px;top:2px;font-size:18px;font-weight:bold">藤原英<span style="font-size:12px;border:1px solid #000">栗</span></div><div class="L" style="left:10px;top:22px;font-size:14px">20勝 <small>(9位)</small></div><div class="hl" style="top:36px"></div><div class="L" style="left:2px;top:38px;font-size:13px">NFしがB①</div><div class="hl" style="top:53px"></div><div class="L" style="left:2px;top:56px;font-size:14px">調&nbsp;&nbsp;18.6&nbsp;&nbsp;<span style="color:#e0161e">A A</span></div><div class="hl" style="top:68px"></div><div class="L" style="left:2px;top:70px;font-size:14px">厩&nbsp;&nbsp;19.8&nbsp;&nbsp;&nbsp;B</div></div>
<div class="c id"><div class="idh">▽63</div><div class="ir" style="top:20px"><i>テ</i>-1.6⑨</div><div class="ir" style="top:36px"><i>位</i>-8.3⑭</div><div class="ir" style="top:53px"><i>上</i>8.9⑤</div><div class="ir" style="top:69px"><i>ペ</i>6.7⑧</div></div>
<div class="c ck"><div class="L" style="left:6px;top:3px">2</div><div class="L" style="left:6px;top:24px">0</div><div class="L" style="left:6px;top:45px">2</div><div class="L" style="left:6px;top:67px">1</div></div>
<div class="c cr"><div class="L" style="left:2px;top:3px">芝 2 2 1 3</div><div class="L" style="left:2px;top:19px">重 0 0 0 0</div><div class="L" style="left:2px;top:35px">天 1 0 0 0</div><div class="L" style="left:2px;top:51px">千 0 0 0 0</div><div class="hl" style="top:66px"></div><div class="L" style="left:10px;top:69px">1 0 1 1</div></div>
<div class="c ds"><div class="L" style="left:2px;top:4px">72東② 6才5月</div><div class="L" style="left:2px;top:20px">57阪⑦ 7才4月</div><div class="L" style="left:20px;top:36px">・・・・・</div><div class="L" style="left:20px;top:52px">・・・・・</div><div class="hl" style="top:66px"></div><div class="L" style="left:2px;top:71px;font-size:9px;font-weight:normal">63H①1234 6才3月</div></div>
<div class="c st"><div class="L" style="left:1px;top:3px">追込◎</div><div class="L" style="left:4px;top:19px">中</div><div class="L" style="left:0;top:35px">中標準</div><div class="L" style="left:5px;top:51px">普通</div><div class="L" style="left:5px;top:69px">普通</div></div>
<div class="c p" style="left:780px"><div class="t">3/6 1阪②<b>播磨S</b> 3勝</div><i class="f fr">1</i><div class="tm">芝ダ <b>1234</b>福永祐57 外中</div><div class="l3">34.9Ⓜ36.7⑧ ⑦⑧⑤ ゲート○</div><div class="l4">16ト12 ②プロスパラス 0.2</div><div class="l5">18.5→15.5→526K</div><b class="k">63</b><span class="m">69<br>62</span><div class="g">良 平 面鼻ネバ</div></div>
<div class="c p" style="left:971px"><div class="t">4/3 2阪③<b>コーラS</b> L</div><i class="f">6</i><div class="tm">芝ダ <b>1235</b>福永祐55 外外</div><div class="l3">34.3Ⓗ36.6⑨ ⑦⑥⑩ 展開待ち</div><div class="l4">16ト16 ②リアンヴェリ 0.5</div><div class="l5">18.4↗12.7→526K</div><b class="k">62</b><span class="m">62<br>59</span><div class="g">良 ○2.3 平 面鼻ネバ</div></div>
<div class="c p" style="left:1162px"><div class="t">5/29 2東⑫<b>欅S</b> OP</div><i class="f fg">2</i><div class="tm">芝ダ <b>1219</b>菅原明56 中奈</div><div class="l3">35.2Ⓗ35.0❸ ⑨⑩⑩ 後方から</div><div class="l4">16ト15 ⑥タガノビュー 0.0</div><div class="l5">-0.6↗7.7→516K</div><b class="k">72</b><span class="m">66<br>63</span><div class="g">余 平 面鼻Eネバ</div></div>
<div class="c p" style="left:1353px"><div class="t">4/30 2阪⑪<b>天王山S</b> OP</div><i class="f">6</i><div class="tm">芝ダ <b>1111</b>福永祐57 外外</div><div class="l3">35.0Ⓜ35.9⑤ ⑬⑬⑫ 距離短</div><div class="l4">16ト14 ③デュアリスト 0.6</div><div class="l5">10.2↗7.2→536K</div><b class="k">57</b><span class="m">65<br>69</span><div class="g">余 注 2.1 平 面鼻ネeバ</div></div>
<div class="c ss"><div class="sr" style="top:0"><b>阪ダ</b>1012</div><div class="sr" style="top:16px"><b>京ダ</b>0102</div><div class="sr" style="top:33px"><b>全右</b>1025</div><div class="sr" style="top:49px;background:#bbb"><b>全</b>4338</div><div class="sr" style="top:66px;background:#555;color:#fff"><b>重不</b>0101</div></div>
<div class="c cl"><div class="L" style="left:4px;top:8px;line-height:17px;white-space:normal;width:10px">0 1 0 2</div></div>
<div class="c vn">⑯グレートウ</div>
</div>
</div>
<div class="a" style="left:23px;top:138px;height:1334px;border-left:1px solid #000"></div>
<div class="a" style="left:1678px;top:138px;height:1334px;border-left:1px solid #000"></div>

<!-- TENKAI -->
<div class="a" style="left:21px;top:1491px;width:38px;height:32px;border:2px solid #555;font-size:13px;font-weight:bold;text-align:center;line-height:14px;padding-top:1px">展開<br>予想</div>
<div class="a" style="left:20px;top:1530px;width:42px;font-size:11px;font-weight:bold;text-align:center;line-height:13px">予想<br>ペース<br>H</div>
<div class="a" style="left:64px;top:1485px;width:1614px;height:101px;border:1px solid #888"></div>
<div class="a" style="left:64px;top:1485px;width:1614px;height:15px;background:#6b5042;color:#fff;font-size:11px;font-weight:bold;line-height:15px">
<span class="L" style="left:80px;top:2px;letter-spacing:7.3px">差0123456789012345678901234 5</span>
<span class="L" style="left:621px;top:2px;letter-spacing:7.3px">差0123456789012345678901234 5</span>
<span class="L" style="left:1199px;top:2px;letter-spacing:7.3px">差01234567890123456789 0</span>
<span class="L" style="left:1550px;top:2px;font-size:10px">(1= 半馬身)</span></div>
<div class="a" style="left:87px;top:1500px;height:86px;border-left:1px solid #555"></div>
<div class="a" style="left:140px;top:1500px;height:86px;border-left:1px solid #bbb"></div>
<div class="a" style="left:568px;top:1500px;height:86px;border-left:1px solid #555"></div>
<div class="a" style="left:590px;top:1500px;height:86px;border-left:1px solid #555"></div>
<div class="a" style="left:644px;top:1500px;height:86px;border-left:1px solid #bbb"></div>
<div class="a" style="left:1141px;top:1500px;height:86px;border-left:1px solid #555"></div>
<div class="a" style="left:1165px;top:1500px;height:86px;border-left:1px solid #555"></div>
<div class="a" style="left:1221px;top:1500px;height:86px;border-left:1px solid #bbb"></div>
<div class="a" style="left:70px;top:1510px;width:12px;font-size:13px;font-weight:bold;line-height:14px;white-space:normal">ゴール図</div>
<div class="a" style="left:573px;top:1500px;width:12px;font-size:13px;font-weight:bold;line-height:14px;white-space:normal;padding-top:2px">残り3F図</div>
<div class="a" style="left:1147px;top:1522px;width:12px;font-size:13px;font-weight:bold;line-height:14px;white-space:normal">道中図</div>
<div class="a" style="left:90px;top:1502px;font-size:13px;font-weight:bold;line-height:16.8px">○最内<br>○内←<br>○中<br>○外<br>○大外</div>
<div class="a" style="left:611px;top:1502px;font-size:13px;font-weight:bold;line-height:16.8px">内←<br>中<br>外<br>大外</div>
<div class="a" style="left:1187px;top:1502px;font-size:13px;font-weight:bold;line-height:16.8px">内←<br>中<br>外</div>

<!-- markers: left chart -->
<div class="mk" style="left:160px;top:1501px"><s style="background:#fff"></s>2</div>
<div class="mk" style="left:355px;top:1501px"><s style="background:#f08a3c"></s>13</div>
<div class="mk" style="left:452px;top:1501px"><s style="background:#2b6cc0"></s>8</div>
<div class="mk" style="left:143px;top:1518px"><s style="background:#ef86b4"></s>15</div>
<div class="mk" style="left:257px;top:1518px"><s style="background:#2b6cc0"></s>7</div>
<div class="mk" style="left:306px;top:1518px"><s style="background:#e0232a"></s>5</div>
<div class="mk" style="left:371px;top:1518px"><s style="background:#f08a3c"></s>14</div>
<div class="mk" style="left:144px;top:1535px"><s style="background:#3a9a43"></s>12</div>
<div class="mk" style="left:240px;top:1535px"><s style="background:#f5e000"></s>10</div>
<div class="mk" style="left:288px;top:1535px"><s style="background:#111"></s>3</div>
<div class="mk" style="left:354px;top:1535px"><s style="background:#e0232a"></s>6</div>
<div class="mk" style="left:143px;top:1551px"><s style="background:#fff"></s>1</div>
<div class="mk" style="left:208px;top:1551px"><s style="background:#3a9a43"></s>11</div>
<div class="mk" style="left:273px;top:1551px"><s style="background:#f5e000"></s>9</div>
<div class="mk" style="left:176px;top:1568px"><s style="background:#ef86b4"></s>16</div>
<div class="mk" style="left:305px;top:1568px"><s style="background:#111"></s>4</div>
<!-- middle chart -->
<div class="mk" style="left:647px;top:1501px"><s style="background:#f08a3c"></s>13</div>
<div class="mk" style="left:680px;top:1501px"><s style="background:#e0232a"></s>5</div>
<div class="mk" style="left:744px;top:1501px"><s style="background:#fff"></s>2</div>
<div class="mk" style="left:776px;top:1501px"><s style="background:#f5e000"></s>10</div>
<div class="mk" style="left:877px;top:1501px"><s style="background:#2b6cc0"></s>8</div>
<div class="mk" style="left:910px;top:1501px"><s style="background:#e0232a"></s>6</div>
<div class="mk" style="left:945px;top:1501px"><s style="background:#111"></s>4</div>
<div class="mk" style="left:997px;top:1501px"><s style="background:#111"></s>3</div>
<div class="mk" style="left:663px;top:1518px"><s style="background:#2b6cc0"></s>7</div>
<div class="mk" style="left:745px;top:1518px"><s style="background:#f08a3c"></s>14</div>
<div class="mk" style="left:840px;top:1518px"><s style="background:#ef86b4"></s>16</div>
<div class="mk" style="left:893px;top:1518px"><s style="background:#ef86b4"></s>15</div>
<div class="mk" style="left:663px;top:1535px"><s style="background:#3a9a43"></s>12</div>
<div class="mk" style="left:760px;top:1535px"><s style="background:#fff"></s>1</div>
<div class="mk" style="left:845px;top:1535px"><s style="background:#f5e000"></s>9</div>
<div class="mk" style="left:760px;top:1551px"><s style="background:#3a9a43"></s>11</div>
<!-- right chart -->
<div class="mk" style="left:1241px;top:1501px"><s style="background:#e0232a"></s>5</div>
<div class="mk" style="left:1293px;top:1501px"><s style="background:#2b6cc0"></s>7</div>
<div class="mk" style="left:1343px;top:1501px"><s style="background:#fff"></s>2</div>
<div class="mk" style="left:1380px;top:1501px"><s style="background:#f08a3c"></s>14</div>
<div class="mk" style="left:1414px;top:1501px"><s style="background:#f5e000"></s>10</div>
<div class="mk" style="left:1448px;top:1501px"><s style="background:#fff"></s>1</div>
<div class="mk" style="left:1483px;top:1501px"><s style="background:#111"></s>4</div>
<div class="mk" style="left:1534px;top:1501px"><s style="background:#111"></s>3</div>
<div class="mk" style="left:1568px;top:1501px"><s style="background:#e0232a"></s>6</div>
<div class="mk" style="left:1225px;top:1518px"><s style="background:#3a9a43"></s>12</div>
<div class="mk" style="left:1345px;top:1518px"><s style="background:#3a9a43"></s>11</div>
<div class="mk" style="left:1414px;top:1518px"><s style="background:#ef86b4"></s>16</div>
<div class="mk" style="left:1448px;top:1518px"><s style="background:#2b6cc0"></s>8</div>
<div class="mk" style="left:1517px;top:1518px"><s style="background:#ef86b4"></s>15</div>
<div class="mk" style="left:1225px;top:1535px"><s style="background:#f08a3c"></s>13</div>
<div class="mk" style="left:1431px;top:1535px"><s style="background:#f5e000"></s>9</div>

<div class="a" style="left:27px;top:1671px;font-size:11.5px;color:#222">万全を期する為に、当日の発走時刻、出走馬、斤量、騎手、枠順等はＪＲＡ発行のものと照合してください。放牧先データは、原則として資料に基づいた表記としています。ご了承の上、ご活用ください。※本紙からの複製、転載、システムの転用を禁ずる。</div>
</body></html>
